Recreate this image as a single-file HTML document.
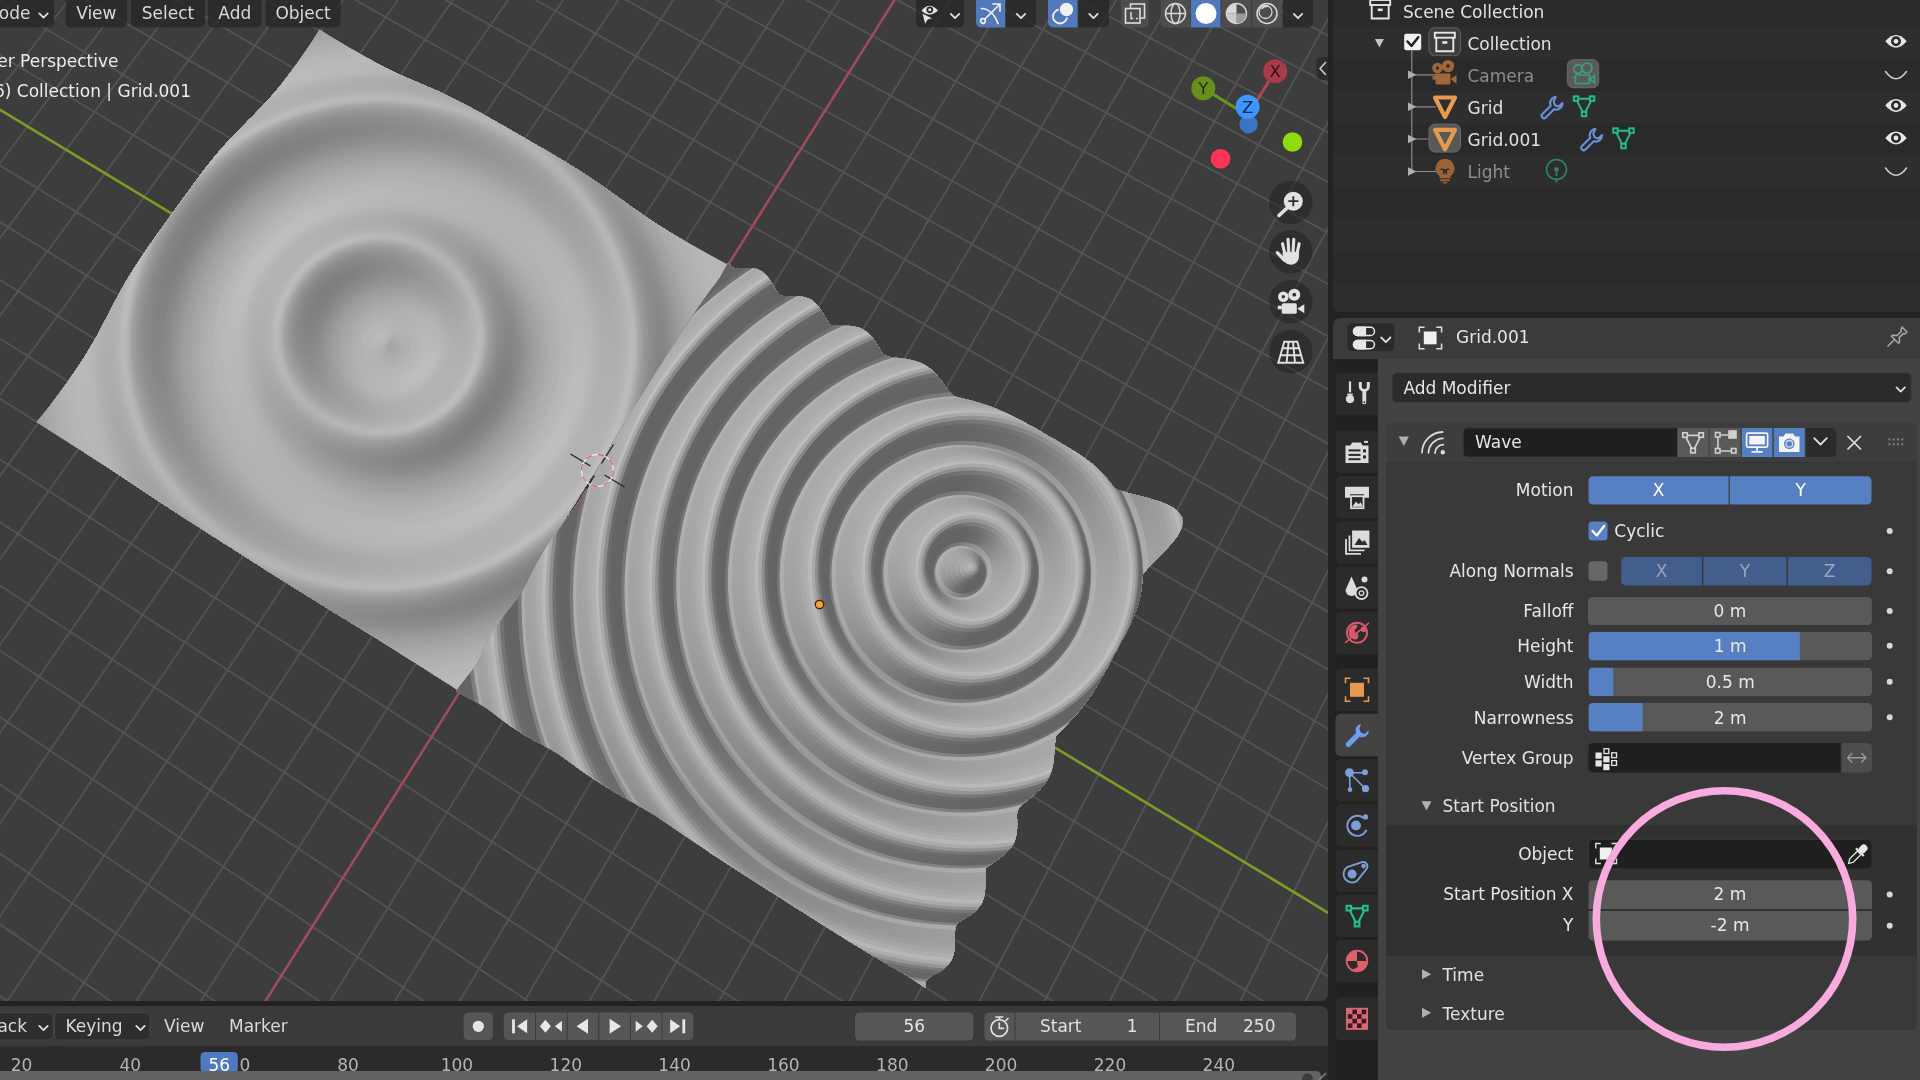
<!DOCTYPE html><html><head><meta charset="utf-8"><title>Blender</title>
<style>html,body{margin:0;padding:0}body{width:1920px;height:1080px;overflow:hidden;position:relative;background:#222222;font-family:"DejaVu Sans","Liberation Sans",sans-serif}svg{will-change:transform}svg text{font-family:"DejaVu Sans","Liberation Sans",sans-serif}</style></head><body>
<svg width="1328" height="1001" viewBox="0 0 1328 1001" style="position:absolute;left:0;top:0;background:#3d3d3d;border-radius:0 0 7px 0" font-family="DejaVu Sans, Liberation Sans, sans-serif"><defs><clipPath id="ac"><path d="M459.7 691.2L462.7 686.7L465.6 682.1L468.6 677.6L471.5 673.1L474.3 668.6L477.2 664.1L480.0 659.5L482.9 655.1L485.7 650.6L488.5 646.1L491.3 641.6L494.1 637.1L496.9 632.6L499.7 628.1L502.4 623.7L505.2 619.2L507.9 614.7L510.7 610.2L513.4 605.7L516.1 601.1L518.8 596.6L521.5 592.1L524.2 587.5L526.9 582.9L529.6 578.4L532.3 573.8L535.0 569.2L537.7 564.6L540.4 560.0L543.1 555.4L545.9 550.9L548.6 546.3L551.3 541.8L554.1 537.2L556.8 532.7L559.6 528.2L562.4 523.7L565.1 519.2L567.9 514.8L570.6 510.3L573.4 505.9L576.2 501.5L578.9 497.1L581.7 492.7L584.4 488.3L587.2 483.9L589.9 479.5L592.7 475.2L595.4 470.8L598.1 466.5L600.9 462.1L603.6 457.8L606.3 453.5L609.0 449.1L611.8 444.8L614.5 440.5L617.2 436.2L619.9 432.0L622.6 427.7L625.3 423.5L628.0 419.2L630.6 415.0L633.3 410.9L636.0 406.7L638.6 402.6L641.3 398.6L643.9 394.6L646.5 390.6L649.1 386.6L651.7 382.7L654.3 378.9L656.9 375.0L659.5 371.2L662.0 367.5L664.5 363.7L667.1 360.0L669.6 356.2L672.1 352.5L674.6 348.7L677.1 344.9L679.6 341.1L682.2 337.3L684.7 333.4L687.2 329.6L689.7 325.7L692.2 321.7L694.7 317.8L697.3 313.8L699.8 309.8L702.3 305.8L704.8 301.8L707.4 297.8L709.9 293.8L712.4 289.7L715.0 285.6L717.5 281.5L720.1 277.3L722.7 273.1L725.3 268.9L727.9 264.5L727.9 264.5L723.5 262.4L719.2 260.3L714.9 258.0L710.6 255.7L706.4 253.4L702.1 251.1L697.9 248.7L693.6 246.3L689.4 243.9L685.2 241.4L681.0 238.9L676.8 236.4L672.6 233.9L668.5 231.4L664.3 228.8L660.1 226.2L656.0 223.5L651.8 220.8L647.6 218.0L643.5 215.2L639.3 212.3L635.2 209.4L631.0 206.5L626.8 203.5L622.7 200.5L618.5 197.5L614.3 194.5L610.1 191.5L605.9 188.6L601.7 185.6L597.5 182.7L593.3 179.8L589.1 177.0L584.9 174.2L580.7 171.5L576.5 168.8L572.2 166.2L568.0 163.6L563.8 161.0L559.6 158.5L555.4 156.0L551.2 153.5L547.0 151.1L542.9 148.6L538.7 146.2L534.5 143.8L530.3 141.4L526.2 139.0L522.0 136.6L517.8 134.2L513.7 131.8L509.5 129.5L505.4 127.1L501.2 124.7L497.1 122.3L493.0 120.0L488.8 117.6L484.7 115.3L480.6 113.0L476.5 110.7L472.4 108.5L468.3 106.3L464.3 104.1L460.2 102.0L456.2 99.9L452.2 97.9L448.2 96.0L444.3 94.1L440.3 92.3L436.4 90.5L432.5 88.8L428.7 87.2L424.8 85.5L421.0 83.9L417.2 82.3L413.4 80.7L409.6 79.1L405.8 77.4L402.0 75.7L398.2 74.0L394.4 72.2L390.6 70.4L386.7 68.5L382.9 66.5L379.0 64.5L375.1 62.4L371.3 60.3L367.4 58.2L363.5 56.0L359.5 53.8L355.6 51.6L351.7 49.4L347.7 47.0L343.8 44.7L339.8 42.3L335.8 39.9L331.8 37.4L327.8 34.9L323.7 32.2L319.6 29.4L319.6 29.4L317.1 33.6L314.6 37.7L312.1 41.7L309.6 45.6L307.0 49.5L304.3 53.3L301.7 57.1L299.1 60.9L296.4 64.6L293.7 68.2L291.0 71.9L288.2 75.5L285.5 79.1L282.7 82.7L279.9 86.2L277.0 89.7L274.1 93.2L271.2 96.5L268.3 99.9L265.3 103.2L262.2 106.4L259.1 109.6L256.0 112.8L252.9 116.0L249.7 119.1L246.5 122.3L243.3 125.5L240.1 128.7L237.0 131.9L233.8 135.2L230.6 138.5L227.5 141.9L224.4 145.4L221.3 148.9L218.2 152.5L215.2 156.1L212.2 159.8L209.2 163.5L206.3 167.3L203.3 171.1L200.4 175.0L197.5 178.9L194.6 182.8L191.7 186.7L188.9 190.7L186.0 194.6L183.1 198.6L180.2 202.6L177.3 206.6L174.5 210.5L171.6 214.5L168.7 218.5L165.8 222.5L162.9 226.6L160.0 230.6L157.1 234.6L154.2 238.7L151.3 242.7L148.5 246.8L145.6 250.9L142.8 255.1L140.0 259.2L137.2 263.4L134.5 267.7L131.8 272.0L129.2 276.3L126.6 280.6L124.0 285.0L121.5 289.5L119.1 293.9L116.6 298.4L114.2 302.9L111.9 307.5L109.5 312.0L107.2 316.5L104.8 321.1L102.5 325.6L100.1 330.0L97.7 334.5L95.2 338.9L92.7 343.3L90.2 347.6L87.5 351.9L84.9 356.2L82.2 360.5L79.4 364.7L76.6 368.9L73.8 373.0L70.9 377.2L68.0 381.4L65.1 385.5L62.1 389.6L59.1 393.7L56.0 397.8L52.9 401.9L49.8 406.0L46.6 410.0L43.3 414.1L39.9 418.1L36.4 422.0L36.4 422.0L41.0 424.8L45.4 427.6L49.7 430.3L54.0 432.9L58.2 435.6L62.3 438.2L66.5 440.8L70.6 443.4L74.6 446.0L78.7 448.6L82.7 451.1L86.6 453.7L90.6 456.2L94.5 458.8L98.4 461.3L102.3 463.8L106.1 466.3L109.9 468.7L113.6 471.2L117.3 473.6L121.0 476.0L124.6 478.4L128.2 480.8L131.8 483.2L135.4 485.6L139.0 488.0L142.6 490.4L146.2 492.9L149.9 495.3L153.6 497.8L157.3 500.2L161.1 502.8L165.0 505.3L168.9 507.8L172.9 510.4L176.9 513.0L180.9 515.7L185.0 518.3L189.2 521.0L193.4 523.6L197.6 526.3L201.8 529.0L206.0 531.7L210.3 534.5L214.6 537.2L218.9 539.9L223.2 542.7L227.5 545.4L231.8 548.1L236.1 550.9L240.4 553.6L244.7 556.4L249.0 559.1L253.4 561.9L257.7 564.6L262.0 567.4L266.4 570.2L270.8 572.9L275.2 575.7L279.6 578.5L284.0 581.3L288.4 584.1L292.9 586.9L297.4 589.7L301.9 592.6L306.5 595.4L311.1 598.2L315.7 601.1L320.3 603.9L325.0 606.8L329.7 609.7L334.4 612.5L339.0 615.4L343.7 618.3L348.4 621.1L353.1 624.0L357.8 626.8L362.4 629.7L367.0 632.5L371.6 635.3L376.2 638.1L380.7 641.0L385.2 643.8L389.7 646.6L394.1 649.3L398.6 652.1L403.0 654.9L407.4 657.7L411.8 660.5L416.2 663.3L420.6 666.1L425.0 668.8L429.4 671.6L433.7 674.4L438.1 677.2L442.4 680.0L446.8 682.8L451.1 685.6L455.4 688.4L459.7 691.2Z"/></clipPath><linearGradient id="a0" x1="0.119" y1="0.176" x2="0.881" y2="0.824"><stop offset="0" stop-color="#989898"/><stop offset="0.167" stop-color="#9d9d9d"/><stop offset="0.333" stop-color="#a3a3a3"/><stop offset="0.5" stop-color="#aaaaaa"/><stop offset="0.667" stop-color="#b1b1b1"/><stop offset="0.833" stop-color="#b6b6b6"/><stop offset="1" stop-color="#bcbcbc"/></linearGradient><linearGradient id="a1" x1="0.119" y1="0.176" x2="0.881" y2="0.824"><stop offset="0" stop-color="#9b9b9b"/><stop offset="0.167" stop-color="#a0a0a0"/><stop offset="0.333" stop-color="#a5a5a5"/><stop offset="0.5" stop-color="#acacac"/><stop offset="0.667" stop-color="#b3b3b3"/><stop offset="0.833" stop-color="#b7b7b7"/><stop offset="1" stop-color="#bebebe"/></linearGradient><linearGradient id="a2" x1="0.119" y1="0.176" x2="0.881" y2="0.824"><stop offset="0" stop-color="#9d9d9d"/><stop offset="0.167" stop-color="#a1a1a1"/><stop offset="0.333" stop-color="#a7a7a7"/><stop offset="0.5" stop-color="#adadad"/><stop offset="0.667" stop-color="#b4b4b4"/><stop offset="0.833" stop-color="#b7b7b7"/><stop offset="1" stop-color="#bebebe"/></linearGradient><linearGradient id="a3" x1="0.119" y1="0.176" x2="0.881" y2="0.824"><stop offset="0" stop-color="#a1a1a1"/><stop offset="0.167" stop-color="#a5a5a5"/><stop offset="0.333" stop-color="#aaaaaa"/><stop offset="0.5" stop-color="#afafaf"/><stop offset="0.667" stop-color="#b5b5b5"/><stop offset="0.833" stop-color="#b8b8b8"/><stop offset="1" stop-color="#bebebe"/></linearGradient><linearGradient id="a4" x1="0.119" y1="0.176" x2="0.881" y2="0.824"><stop offset="0" stop-color="#a3a3a3"/><stop offset="0.167" stop-color="#a7a7a7"/><stop offset="0.333" stop-color="#acacac"/><stop offset="0.5" stop-color="#b0b0b0"/><stop offset="0.667" stop-color="#b5b5b5"/><stop offset="0.833" stop-color="#b8b8b8"/><stop offset="1" stop-color="#bebebe"/></linearGradient><linearGradient id="a5" x1="0.119" y1="0.176" x2="0.881" y2="0.824"><stop offset="0" stop-color="#a5a5a5"/><stop offset="0.167" stop-color="#a8a8a8"/><stop offset="0.333" stop-color="#adadad"/><stop offset="0.5" stop-color="#b1b1b1"/><stop offset="0.667" stop-color="#b5b5b5"/><stop offset="0.833" stop-color="#b8b8b8"/><stop offset="1" stop-color="#bebebe"/></linearGradient><linearGradient id="a6" x1="0.119" y1="0.176" x2="0.881" y2="0.824"><stop offset="0" stop-color="#a7a7a7"/><stop offset="0.167" stop-color="#ababab"/><stop offset="0.333" stop-color="#aeaeae"/><stop offset="0.5" stop-color="#b2b2b2"/><stop offset="0.667" stop-color="#b5b5b5"/><stop offset="0.833" stop-color="#b9b9b9"/><stop offset="1" stop-color="#bcbcbc"/></linearGradient><linearGradient id="a7" x1="0.119" y1="0.176" x2="0.881" y2="0.824"><stop offset="0" stop-color="#aaaaaa"/><stop offset="0.167" stop-color="#adadad"/><stop offset="0.333" stop-color="#b0b0b0"/><stop offset="0.5" stop-color="#b2b2b2"/><stop offset="0.667" stop-color="#b5b5b5"/><stop offset="0.833" stop-color="#b8b8b8"/><stop offset="1" stop-color="#bababa"/></linearGradient><linearGradient id="a8" x1="0.119" y1="0.176" x2="0.881" y2="0.824"><stop offset="0" stop-color="#adadad"/><stop offset="0.167" stop-color="#afafaf"/><stop offset="0.333" stop-color="#b1b1b1"/><stop offset="0.5" stop-color="#b3b3b3"/><stop offset="0.667" stop-color="#b5b5b5"/><stop offset="0.833" stop-color="#b6b6b6"/><stop offset="1" stop-color="#b8b8b8"/></linearGradient><linearGradient id="a9" x1="0.119" y1="0.176" x2="0.881" y2="0.824"><stop offset="0" stop-color="#b0b0b0"/><stop offset="0.167" stop-color="#b1b1b1"/><stop offset="0.333" stop-color="#b2b2b2"/><stop offset="0.5" stop-color="#b3b3b3"/><stop offset="0.667" stop-color="#b4b4b4"/><stop offset="0.833" stop-color="#b5b5b5"/><stop offset="1" stop-color="#b6b6b6"/></linearGradient><linearGradient id="a10" x1="0.119" y1="0.176" x2="0.881" y2="0.824"><stop offset="0" stop-color="#b6b6b6"/><stop offset="0.167" stop-color="#b5b5b5"/><stop offset="0.333" stop-color="#b4b4b4"/><stop offset="0.5" stop-color="#b3b3b3"/><stop offset="0.667" stop-color="#b2b2b2"/><stop offset="0.833" stop-color="#b1b1b1"/><stop offset="1" stop-color="#b0b0b0"/></linearGradient><linearGradient id="a11" x1="0.119" y1="0.176" x2="0.881" y2="0.824"><stop offset="0" stop-color="#b8b8b8"/><stop offset="0.167" stop-color="#b6b6b6"/><stop offset="0.333" stop-color="#b5b5b5"/><stop offset="0.5" stop-color="#b3b3b3"/><stop offset="0.667" stop-color="#b1b1b1"/><stop offset="0.833" stop-color="#afafaf"/><stop offset="1" stop-color="#adadad"/></linearGradient><linearGradient id="a12" x1="0.119" y1="0.176" x2="0.881" y2="0.824"><stop offset="0" stop-color="#bababa"/><stop offset="0.167" stop-color="#b8b8b8"/><stop offset="0.333" stop-color="#b5b5b5"/><stop offset="0.5" stop-color="#b2b2b2"/><stop offset="0.667" stop-color="#b0b0b0"/><stop offset="0.833" stop-color="#adadad"/><stop offset="1" stop-color="#aaaaaa"/></linearGradient><linearGradient id="a13" x1="0.119" y1="0.176" x2="0.881" y2="0.824"><stop offset="0" stop-color="#bcbcbc"/><stop offset="0.167" stop-color="#b9b9b9"/><stop offset="0.333" stop-color="#b5b5b5"/><stop offset="0.5" stop-color="#b2b2b2"/><stop offset="0.667" stop-color="#aeaeae"/><stop offset="0.833" stop-color="#ababab"/><stop offset="1" stop-color="#a7a7a7"/></linearGradient><linearGradient id="a14" x1="0.119" y1="0.176" x2="0.881" y2="0.824"><stop offset="0" stop-color="#bebebe"/><stop offset="0.167" stop-color="#b8b8b8"/><stop offset="0.333" stop-color="#b5b5b5"/><stop offset="0.5" stop-color="#b1b1b1"/><stop offset="0.667" stop-color="#adadad"/><stop offset="0.833" stop-color="#a8a8a8"/><stop offset="1" stop-color="#a5a5a5"/></linearGradient><linearGradient id="a15" x1="0.119" y1="0.176" x2="0.881" y2="0.824"><stop offset="0" stop-color="#bebebe"/><stop offset="0.167" stop-color="#b8b8b8"/><stop offset="0.333" stop-color="#b5b5b5"/><stop offset="0.5" stop-color="#b0b0b0"/><stop offset="0.667" stop-color="#acacac"/><stop offset="0.833" stop-color="#a7a7a7"/><stop offset="1" stop-color="#a3a3a3"/></linearGradient><linearGradient id="a16" x1="0.119" y1="0.176" x2="0.881" y2="0.824"><stop offset="0" stop-color="#bebebe"/><stop offset="0.167" stop-color="#b8b8b8"/><stop offset="0.333" stop-color="#b5b5b5"/><stop offset="0.5" stop-color="#afafaf"/><stop offset="0.667" stop-color="#aaaaaa"/><stop offset="0.833" stop-color="#a5a5a5"/><stop offset="1" stop-color="#a1a1a1"/></linearGradient><linearGradient id="a17" x1="0.119" y1="0.176" x2="0.881" y2="0.824"><stop offset="0" stop-color="#bebebe"/><stop offset="0.167" stop-color="#b7b7b7"/><stop offset="0.333" stop-color="#b4b4b4"/><stop offset="0.5" stop-color="#adadad"/><stop offset="0.667" stop-color="#a7a7a7"/><stop offset="0.833" stop-color="#a1a1a1"/><stop offset="1" stop-color="#9d9d9d"/></linearGradient><linearGradient id="a18" x1="0.119" y1="0.176" x2="0.881" y2="0.824"><stop offset="0" stop-color="#bebebe"/><stop offset="0.167" stop-color="#b7b7b7"/><stop offset="0.333" stop-color="#b3b3b3"/><stop offset="0.5" stop-color="#acacac"/><stop offset="0.667" stop-color="#a5a5a5"/><stop offset="0.833" stop-color="#a0a0a0"/><stop offset="1" stop-color="#9b9b9b"/></linearGradient><linearGradient id="a19" x1="0.119" y1="0.176" x2="0.881" y2="0.824"><stop offset="0" stop-color="#bcbcbc"/><stop offset="0.167" stop-color="#b6b6b6"/><stop offset="0.333" stop-color="#b1b1b1"/><stop offset="0.5" stop-color="#aaaaaa"/><stop offset="0.667" stop-color="#a3a3a3"/><stop offset="0.833" stop-color="#9d9d9d"/><stop offset="1" stop-color="#989898"/></linearGradient><linearGradient id="a20" x1="0.119" y1="0.176" x2="0.881" y2="0.824"><stop offset="0" stop-color="#b9b9b9"/><stop offset="0.167" stop-color="#b6b6b6"/><stop offset="0.333" stop-color="#afafaf"/><stop offset="0.5" stop-color="#a7a7a7"/><stop offset="0.667" stop-color="#a0a0a0"/><stop offset="0.833" stop-color="#9a9a9a"/><stop offset="1" stop-color="#949494"/></linearGradient><linearGradient id="a21" x1="0.119" y1="0.176" x2="0.881" y2="0.824"><stop offset="0" stop-color="#b6b6b6"/><stop offset="0.167" stop-color="#b3b3b3"/><stop offset="0.333" stop-color="#adadad"/><stop offset="0.5" stop-color="#a4a4a4"/><stop offset="0.667" stop-color="#9e9e9e"/><stop offset="0.833" stop-color="#979797"/><stop offset="1" stop-color="#909090"/></linearGradient><linearGradient id="a22" x1="0.119" y1="0.176" x2="0.881" y2="0.824"><stop offset="0" stop-color="#b5b5b5"/><stop offset="0.167" stop-color="#b1b1b1"/><stop offset="0.333" stop-color="#aaaaaa"/><stop offset="0.5" stop-color="#a2a2a2"/><stop offset="0.667" stop-color="#9b9b9b"/><stop offset="0.833" stop-color="#949494"/><stop offset="1" stop-color="#8c8c8c"/></linearGradient><linearGradient id="a23" x1="0.119" y1="0.176" x2="0.881" y2="0.824"><stop offset="0" stop-color="#b4b4b4"/><stop offset="0.167" stop-color="#afafaf"/><stop offset="0.333" stop-color="#a8a8a8"/><stop offset="0.5" stop-color="#a0a0a0"/><stop offset="0.667" stop-color="#999999"/><stop offset="0.833" stop-color="#919191"/><stop offset="1" stop-color="#888888"/></linearGradient><linearGradient id="a24" x1="0.119" y1="0.176" x2="0.881" y2="0.824"><stop offset="0" stop-color="#b3b3b3"/><stop offset="0.167" stop-color="#aeaeae"/><stop offset="0.333" stop-color="#a6a6a6"/><stop offset="0.5" stop-color="#9f9f9f"/><stop offset="0.667" stop-color="#969696"/><stop offset="0.833" stop-color="#8d8d8d"/><stop offset="1" stop-color="#848484"/></linearGradient><linearGradient id="a25" x1="0.119" y1="0.176" x2="0.881" y2="0.824"><stop offset="0" stop-color="#b3b3b3"/><stop offset="0.167" stop-color="#adadad"/><stop offset="0.333" stop-color="#a6a6a6"/><stop offset="0.5" stop-color="#9e9e9e"/><stop offset="0.667" stop-color="#959595"/><stop offset="0.833" stop-color="#8c8c8c"/><stop offset="1" stop-color="#838383"/></linearGradient><linearGradient id="a26" x1="0.119" y1="0.176" x2="0.881" y2="0.824"><stop offset="0" stop-color="#b3b3b3"/><stop offset="0.167" stop-color="#acacac"/><stop offset="0.333" stop-color="#a4a4a4"/><stop offset="0.5" stop-color="#9c9c9c"/><stop offset="0.667" stop-color="#929292"/><stop offset="0.833" stop-color="#888888"/><stop offset="1" stop-color="#7f7f7f"/></linearGradient><linearGradient id="a27" x1="0.119" y1="0.176" x2="0.881" y2="0.824"><stop offset="0" stop-color="#b3b3b3"/><stop offset="0.167" stop-color="#ababab"/><stop offset="0.333" stop-color="#a3a3a3"/><stop offset="0.5" stop-color="#9b9b9b"/><stop offset="0.667" stop-color="#919191"/><stop offset="0.833" stop-color="#878787"/><stop offset="1" stop-color="#7d7d7d"/></linearGradient><linearGradient id="a28" x1="0.119" y1="0.176" x2="0.881" y2="0.824"><stop offset="0" stop-color="#b3b3b3"/><stop offset="0.167" stop-color="#adadad"/><stop offset="0.333" stop-color="#a5a5a5"/><stop offset="0.5" stop-color="#9d9d9d"/><stop offset="0.667" stop-color="#949494"/><stop offset="0.833" stop-color="#8a8a8a"/><stop offset="1" stop-color="#818181"/></linearGradient><linearGradient id="a29" x1="0.119" y1="0.176" x2="0.881" y2="0.824"><stop offset="0" stop-color="#b4b4b4"/><stop offset="0.167" stop-color="#afafaf"/><stop offset="0.333" stop-color="#a7a7a7"/><stop offset="0.5" stop-color="#9f9f9f"/><stop offset="0.667" stop-color="#989898"/><stop offset="0.833" stop-color="#8f8f8f"/><stop offset="1" stop-color="#868686"/></linearGradient><linearGradient id="a30" x1="0.119" y1="0.176" x2="0.881" y2="0.824"><stop offset="0" stop-color="#b8b8b8"/><stop offset="0.167" stop-color="#b4b4b4"/><stop offset="0.333" stop-color="#adadad"/><stop offset="0.5" stop-color="#a6a6a6"/><stop offset="0.667" stop-color="#9f9f9f"/><stop offset="0.833" stop-color="#989898"/><stop offset="1" stop-color="#929292"/></linearGradient><linearGradient id="a31" x1="0.119" y1="0.176" x2="0.881" y2="0.824"><stop offset="0" stop-color="#bdbdbd"/><stop offset="0.167" stop-color="#b6b6b6"/><stop offset="0.333" stop-color="#b2b2b2"/><stop offset="0.5" stop-color="#ababab"/><stop offset="0.667" stop-color="#a4a4a4"/><stop offset="0.833" stop-color="#9e9e9e"/><stop offset="1" stop-color="#9a9a9a"/></linearGradient><linearGradient id="a32" x1="0.119" y1="0.176" x2="0.881" y2="0.824"><stop offset="0" stop-color="#9a9a9a"/><stop offset="0.167" stop-color="#9e9e9e"/><stop offset="0.333" stop-color="#a4a4a4"/><stop offset="0.5" stop-color="#ababab"/><stop offset="0.667" stop-color="#b2b2b2"/><stop offset="0.833" stop-color="#b6b6b6"/><stop offset="1" stop-color="#bdbdbd"/></linearGradient><linearGradient id="a33" x1="0.119" y1="0.176" x2="0.881" y2="0.824"><stop offset="0" stop-color="#929292"/><stop offset="0.167" stop-color="#989898"/><stop offset="0.333" stop-color="#9f9f9f"/><stop offset="0.5" stop-color="#a6a6a6"/><stop offset="0.667" stop-color="#adadad"/><stop offset="0.833" stop-color="#b4b4b4"/><stop offset="1" stop-color="#b8b8b8"/></linearGradient><linearGradient id="a34" x1="0.119" y1="0.176" x2="0.881" y2="0.824"><stop offset="0" stop-color="#8c8c8c"/><stop offset="0.167" stop-color="#949494"/><stop offset="0.333" stop-color="#9b9b9b"/><stop offset="0.5" stop-color="#a2a2a2"/><stop offset="0.667" stop-color="#aaaaaa"/><stop offset="0.833" stop-color="#b1b1b1"/><stop offset="1" stop-color="#b5b5b5"/></linearGradient><linearGradient id="a35" x1="0.119" y1="0.176" x2="0.881" y2="0.824"><stop offset="0" stop-color="#868686"/><stop offset="0.167" stop-color="#8f8f8f"/><stop offset="0.333" stop-color="#989898"/><stop offset="0.5" stop-color="#9f9f9f"/><stop offset="0.667" stop-color="#a7a7a7"/><stop offset="0.833" stop-color="#afafaf"/><stop offset="1" stop-color="#b4b4b4"/></linearGradient><linearGradient id="a36" x1="0.119" y1="0.176" x2="0.881" y2="0.824"><stop offset="0" stop-color="#838383"/><stop offset="0.167" stop-color="#8c8c8c"/><stop offset="0.333" stop-color="#959595"/><stop offset="0.5" stop-color="#9e9e9e"/><stop offset="0.667" stop-color="#a6a6a6"/><stop offset="0.833" stop-color="#adadad"/><stop offset="1" stop-color="#b3b3b3"/></linearGradient><linearGradient id="a37" x1="0.119" y1="0.176" x2="0.881" y2="0.824"><stop offset="0" stop-color="#818181"/><stop offset="0.167" stop-color="#8a8a8a"/><stop offset="0.333" stop-color="#949494"/><stop offset="0.5" stop-color="#9d9d9d"/><stop offset="0.667" stop-color="#a5a5a5"/><stop offset="0.833" stop-color="#adadad"/><stop offset="1" stop-color="#b3b3b3"/></linearGradient><linearGradient id="a38" x1="0.119" y1="0.176" x2="0.881" y2="0.824"><stop offset="0" stop-color="#7f7f7f"/><stop offset="0.167" stop-color="#888888"/><stop offset="0.333" stop-color="#929292"/><stop offset="0.5" stop-color="#9c9c9c"/><stop offset="0.667" stop-color="#a4a4a4"/><stop offset="0.833" stop-color="#acacac"/><stop offset="1" stop-color="#b3b3b3"/></linearGradient><linearGradient id="a39" x1="0.119" y1="0.176" x2="0.881" y2="0.824"><stop offset="0" stop-color="#7d7d7d"/><stop offset="0.167" stop-color="#878787"/><stop offset="0.333" stop-color="#919191"/><stop offset="0.5" stop-color="#9b9b9b"/><stop offset="0.667" stop-color="#a3a3a3"/><stop offset="0.833" stop-color="#ababab"/><stop offset="1" stop-color="#b3b3b3"/></linearGradient><linearGradient id="a40" x1="0.119" y1="0.176" x2="0.881" y2="0.824"><stop offset="0" stop-color="#848484"/><stop offset="0.167" stop-color="#8d8d8d"/><stop offset="0.333" stop-color="#969696"/><stop offset="0.5" stop-color="#9f9f9f"/><stop offset="0.667" stop-color="#a6a6a6"/><stop offset="0.833" stop-color="#aeaeae"/><stop offset="1" stop-color="#b3b3b3"/></linearGradient><linearGradient id="a41" x1="0.119" y1="0.176" x2="0.881" y2="0.824"><stop offset="0" stop-color="#888888"/><stop offset="0.167" stop-color="#919191"/><stop offset="0.333" stop-color="#999999"/><stop offset="0.5" stop-color="#a0a0a0"/><stop offset="0.667" stop-color="#a8a8a8"/><stop offset="0.833" stop-color="#afafaf"/><stop offset="1" stop-color="#b4b4b4"/></linearGradient><linearGradient id="a42" x1="0.119" y1="0.176" x2="0.881" y2="0.824"><stop offset="0" stop-color="#909090"/><stop offset="0.167" stop-color="#979797"/><stop offset="0.333" stop-color="#9e9e9e"/><stop offset="0.5" stop-color="#a4a4a4"/><stop offset="0.667" stop-color="#adadad"/><stop offset="0.833" stop-color="#b3b3b3"/><stop offset="1" stop-color="#b6b6b6"/></linearGradient><linearGradient id="a43" x1="0.119" y1="0.176" x2="0.881" y2="0.824"><stop offset="0" stop-color="#949494"/><stop offset="0.167" stop-color="#9a9a9a"/><stop offset="0.333" stop-color="#a0a0a0"/><stop offset="0.5" stop-color="#a7a7a7"/><stop offset="0.667" stop-color="#afafaf"/><stop offset="0.833" stop-color="#b6b6b6"/><stop offset="1" stop-color="#b9b9b9"/></linearGradient><clipPath id="bc"><path d="M925.6 988.1L925.9 980.9L929.6 976.9L934.9 974.1L940.1 971.2L944.9 967.9L949.0 964.0L952.0 959.1L953.9 953.4L954.7 947.0L955.0 940.2L955.0 933.4L955.1 926.7L958.5 922.3L963.8 919.1L969.1 915.9L974.1 912.3L978.3 908.3L981.6 903.6L983.8 898.3L984.9 892.5L985.2 886.4L985.2 880.1L985.1 873.9L985.7 868.1L990.7 864.5L996.0 860.8L1001.3 857.1L1006.1 853.1L1010.2 848.8L1013.4 844.1L1015.5 839.0L1016.6 833.5L1017.1 827.9L1017.1 822.3L1017.0 816.6L1017.1 811.1L1019.8 806.5L1024.8 802.4L1029.9 798.3L1034.9 794.1L1039.6 789.8L1043.7 785.3L1047.0 780.7L1049.6 775.9L1051.5 770.9L1052.7 765.9L1053.5 760.8L1054.0 755.8L1054.4 750.7L1054.8 745.8L1055.3 740.9L1056.1 736.0L1060.3 731.6L1064.5 727.1L1068.8 722.6L1072.9 718.0L1077.0 713.5L1080.9 708.9L1084.5 704.2L1088.0 699.6L1091.3 694.9L1094.4 690.2L1097.3 685.5L1100.1 680.8L1102.7 676.1L1105.3 671.4L1107.9 666.8L1110.4 662.1L1112.9 657.5L1115.3 652.8L1117.8 648.2L1120.3 643.5L1122.7 638.9L1125.1 634.3L1127.5 629.7L1129.8 625.1L1131.9 620.5L1133.9 616.0L1135.8 611.5L1137.4 607.0L1138.7 602.7L1139.8 598.3L1140.7 594.1L1141.4 589.9L1141.9 585.8L1142.3 581.7L1142.7 577.7L1143.1 573.7L1147.4 568.8L1152.0 563.9L1156.9 558.9L1161.8 553.8L1166.7 548.8L1171.2 543.8L1175.2 538.9L1178.5 534.2L1180.8 529.7L1182.2 525.5L1182.7 521.6L1182.4 518.0L1182.4 518.0L1180.3 514.4L1177.4 511.1L1173.7 508.1L1168.9 505.3L1163.3 502.9L1157.0 500.7L1150.2 498.7L1143.1 496.8L1136.0 495.0L1129.0 493.2L1122.2 491.3L1115.8 489.4L1113.0 486.0L1110.3 482.6L1107.5 479.2L1104.6 475.8L1101.6 472.5L1098.3 469.2L1094.8 466.0L1091.1 462.9L1087.1 459.9L1083.0 456.9L1078.7 454.0L1074.3 451.2L1069.8 448.5L1065.2 445.7L1060.6 443.0L1056.0 440.3L1051.3 437.7L1046.6 435.0L1042.0 432.3L1037.3 429.6L1032.7 427.0L1028.0 424.4L1023.3 421.7L1018.5 419.2L1013.7 416.7L1008.8 414.2L1003.7 411.9L998.5 409.7L993.2 407.6L987.7 405.6L982.1 403.8L976.4 402.1L970.6 400.4L964.8 398.9L959.0 397.4L953.3 395.8L950.1 392.2L947.0 388.5L944.1 384.6L941.1 380.6L938.0 376.7L934.7 372.9L931.1 369.5L927.1 366.4L922.5 363.8L917.4 361.7L911.9 360.2L906.0 359.1L900.0 358.3L893.9 357.6L887.9 356.8L883.4 354.4L880.5 350.0L877.8 345.5L874.9 341.0L871.7 336.7L868.1 333.0L863.9 330.0L859.1 327.8L853.8 326.5L848.1 325.8L842.2 325.5L836.3 325.2L830.6 324.9L827.3 320.7L824.4 315.8L821.4 310.8L818.2 306.2L814.5 302.3L810.4 299.2L805.6 297.3L800.4 296.3L794.9 296.0L789.3 296.1L783.7 296.2L779.1 294.5L775.9 289.4L772.7 284.2L769.4 279.2L765.8 274.8L761.7 271.4L757.2 269.1L752.3 268.1L747.1 268.0L741.8 268.3L736.6 268.7L731.9 267.6L728.5 262.3L728.5 262.3L725.6 267.5L722.8 272.7L720.0 277.7L717.7 280.9L715.5 283.9L713.2 287.0L710.9 290.0L708.6 293.2L706.3 296.4L703.9 299.6L701.6 303.0L699.1 306.4L696.7 309.9L694.2 313.6L691.7 317.3L689.2 321.1L686.6 324.9L684.1 328.8L681.5 332.8L678.9 336.9L676.3 341.0L673.6 345.1L671.0 349.3L668.4 353.4L665.7 357.6L663.0 361.9L660.4 366.1L657.7 370.3L655.0 374.6L652.4 378.8L649.7 383.1L647.0 387.3L644.3 391.6L641.6 395.9L638.9 400.2L636.2 404.5L633.5 408.8L630.8 413.1L628.1 417.5L625.4 421.9L622.7 426.3L620.0 430.8L617.2 435.3L614.5 439.8L611.8 444.4L609.0 449.0L606.3 453.7L603.6 458.4L600.9 463.1L598.2 467.9L595.5 472.6L592.8 477.4L590.1 482.3L587.4 487.1L584.8 491.9L582.1 496.7L579.5 501.3L576.7 505.2L573.9 509.0L571.1 512.8L568.2 516.6L565.4 520.4L562.5 524.3L559.6 528.2L556.7 532.1L553.8 536.2L550.9 540.4L548.0 544.8L545.2 549.2L542.4 553.8L539.7 558.5L537.0 563.3L534.4 568.2L531.9 573.1L529.4 578.0L526.9 582.9L524.4 587.8L522.0 592.6L519.0 596.8L515.9 600.9L512.6 605.0L509.4 609.1L506.1 613.3L502.9 617.5L499.7 621.9L496.7 626.4L493.8 631.0L491.0 635.6L488.5 640.4L486.0 645.2L483.7 649.9L481.5 654.7L479.3 659.4L477.1 664.0L473.9 668.5L470.3 672.9L466.7 677.4L463.1 682.0L459.5 686.6L456.1 691.3L456.1 691.3L461.1 694.2L466.3 697.0L471.5 699.8L476.7 702.6L481.8 705.3L486.6 708.1L490.5 711.1L494.4 714.0L498.3 717.1L502.3 720.1L506.5 723.1L510.8 726.2L515.3 729.1L519.9 732.1L524.6 734.9L529.4 737.7L534.3 740.4L539.2 743.1L544.0 745.7L548.8 748.3L553.6 750.9L558.2 753.6L562.5 756.8L566.9 760.0L571.3 763.2L575.8 766.5L580.3 769.7L584.9 773.0L589.5 776.1L594.2 779.3L598.8 782.3L603.5 785.3L608.2 788.1L612.9 790.9L617.5 793.7L622.1 796.3L626.7 798.9L631.3 801.5L635.8 804.1L640.3 806.6L644.8 809.2L649.3 811.8L653.7 814.3L658.5 817.6L663.2 820.8L668.0 824.1L672.9 827.5L677.7 830.8L682.6 834.1L687.5 837.4L692.4 840.8L697.3 844.1L702.2 847.3L707.1 850.6L712.0 853.9L716.9 857.1L721.8 860.3L726.7 863.5L731.5 866.6L736.4 869.7L741.2 872.9L746.1 876.0L751.0 879.1L755.8 882.2L760.6 885.3L765.5 888.4L770.3 891.4L775.2 894.5L780.0 897.6L784.9 900.7L789.8 903.8L794.6 906.9L799.5 910.0L804.4 913.1L809.3 916.2L814.1 919.3L819.0 922.4L823.9 925.5L828.7 928.5L833.5 931.6L838.3 934.6L843.1 937.5L847.8 940.5L852.5 943.4L857.1 946.2L861.7 949.0L866.2 951.7L870.7 954.4L875.0 957.0L879.3 959.5L883.6 962.0L887.7 964.4L891.9 966.8L895.9 969.1L900.0 971.4L904.0 973.7L908.2 976.2L913.9 980.0L919.7 984.0L925.6 988.1Z"/></clipPath><linearGradient id="b0" x1="0.119" y1="0.176" x2="0.881" y2="0.824"><stop offset="0" stop-color="#878787"/><stop offset="0.167" stop-color="#929292"/><stop offset="0.333" stop-color="#9c9c9c"/><stop offset="0.5" stop-color="#a4a4a4"/><stop offset="0.667" stop-color="#ababab"/><stop offset="0.833" stop-color="#afafaf"/><stop offset="1" stop-color="#b2b2b2"/></linearGradient><linearGradient id="b1" x1="0.119" y1="0.176" x2="0.881" y2="0.824"><stop offset="0" stop-color="#646464"/><stop offset="0.167" stop-color="#757575"/><stop offset="0.333" stop-color="#858585"/><stop offset="0.5" stop-color="#959595"/><stop offset="0.667" stop-color="#a1a1a1"/><stop offset="0.833" stop-color="#aaaaaa"/><stop offset="1" stop-color="#b0b0b0"/></linearGradient><linearGradient id="b2" x1="0.119" y1="0.176" x2="0.881" y2="0.824"><stop offset="0" stop-color="#646464"/><stop offset="0.167" stop-color="#676767"/><stop offset="0.333" stop-color="#757575"/><stop offset="0.5" stop-color="#898989"/><stop offset="0.667" stop-color="#989898"/><stop offset="0.833" stop-color="#a4a4a4"/><stop offset="1" stop-color="#aeaeae"/></linearGradient><linearGradient id="b3" x1="0.119" y1="0.176" x2="0.881" y2="0.824"><stop offset="0" stop-color="#646464"/><stop offset="0.167" stop-color="#646464"/><stop offset="0.333" stop-color="#6e6e6e"/><stop offset="0.5" stop-color="#828282"/><stop offset="0.667" stop-color="#949494"/><stop offset="0.833" stop-color="#a1a1a1"/><stop offset="1" stop-color="#ababab"/></linearGradient><linearGradient id="b4" x1="0.119" y1="0.176" x2="0.881" y2="0.824"><stop offset="0" stop-color="#646464"/><stop offset="0.167" stop-color="#646464"/><stop offset="0.333" stop-color="#6d6d6d"/><stop offset="0.5" stop-color="#808080"/><stop offset="0.667" stop-color="#929292"/><stop offset="0.833" stop-color="#a0a0a0"/><stop offset="1" stop-color="#ababab"/></linearGradient><linearGradient id="b5" x1="0.119" y1="0.176" x2="0.881" y2="0.824"><stop offset="0" stop-color="#6d6d6d"/><stop offset="0.167" stop-color="#7d7d7d"/><stop offset="0.333" stop-color="#8c8c8c"/><stop offset="0.5" stop-color="#999999"/><stop offset="0.667" stop-color="#a4a4a4"/><stop offset="0.833" stop-color="#acacac"/><stop offset="1" stop-color="#b1b1b1"/></linearGradient><linearGradient id="b6" x1="0.119" y1="0.176" x2="0.881" y2="0.824"><stop offset="0" stop-color="#b1b1b1"/><stop offset="0.167" stop-color="#acacac"/><stop offset="0.333" stop-color="#a4a4a4"/><stop offset="0.5" stop-color="#999999"/><stop offset="0.667" stop-color="#8c8c8c"/><stop offset="0.833" stop-color="#7d7d7d"/><stop offset="1" stop-color="#6d6d6d"/></linearGradient><linearGradient id="b7" x1="0.119" y1="0.176" x2="0.881" y2="0.824"><stop offset="0" stop-color="#ababab"/><stop offset="0.167" stop-color="#a0a0a0"/><stop offset="0.333" stop-color="#929292"/><stop offset="0.5" stop-color="#808080"/><stop offset="0.667" stop-color="#6d6d6d"/><stop offset="0.833" stop-color="#646464"/><stop offset="1" stop-color="#646464"/></linearGradient><linearGradient id="b8" x1="0.119" y1="0.176" x2="0.881" y2="0.824"><stop offset="0" stop-color="#ababab"/><stop offset="0.167" stop-color="#a1a1a1"/><stop offset="0.333" stop-color="#949494"/><stop offset="0.5" stop-color="#828282"/><stop offset="0.667" stop-color="#6e6e6e"/><stop offset="0.833" stop-color="#646464"/><stop offset="1" stop-color="#646464"/></linearGradient><linearGradient id="b9" x1="0.119" y1="0.176" x2="0.881" y2="0.824"><stop offset="0" stop-color="#aeaeae"/><stop offset="0.167" stop-color="#a4a4a4"/><stop offset="0.333" stop-color="#989898"/><stop offset="0.5" stop-color="#898989"/><stop offset="0.667" stop-color="#757575"/><stop offset="0.833" stop-color="#676767"/><stop offset="1" stop-color="#646464"/></linearGradient><linearGradient id="b10" x1="0.119" y1="0.176" x2="0.881" y2="0.824"><stop offset="0" stop-color="#b0b0b0"/><stop offset="0.167" stop-color="#aaaaaa"/><stop offset="0.333" stop-color="#a1a1a1"/><stop offset="0.5" stop-color="#959595"/><stop offset="0.667" stop-color="#858585"/><stop offset="0.833" stop-color="#757575"/><stop offset="1" stop-color="#646464"/></linearGradient><linearGradient id="b11" x1="0.119" y1="0.176" x2="0.881" y2="0.824"><stop offset="0" stop-color="#b2b2b2"/><stop offset="0.167" stop-color="#afafaf"/><stop offset="0.333" stop-color="#ababab"/><stop offset="0.5" stop-color="#a4a4a4"/><stop offset="0.667" stop-color="#9c9c9c"/><stop offset="0.833" stop-color="#929292"/><stop offset="1" stop-color="#878787"/></linearGradient><linearGradient id="b12" x1="0.119" y1="0.176" x2="0.881" y2="0.824"><stop offset="0" stop-color="#bebebe"/><stop offset="0.167" stop-color="#b8b8b8"/><stop offset="0.333" stop-color="#b6b6b6"/><stop offset="0.5" stop-color="#b0b0b0"/><stop offset="0.667" stop-color="#adadad"/><stop offset="0.833" stop-color="#a9a9a9"/><stop offset="1" stop-color="#a6a6a6"/></linearGradient><linearGradient id="b13" x1="0.119" y1="0.176" x2="0.881" y2="0.824"><stop offset="0" stop-color="#a6a6a6"/><stop offset="0.167" stop-color="#a9a9a9"/><stop offset="0.333" stop-color="#adadad"/><stop offset="0.5" stop-color="#b0b0b0"/><stop offset="0.667" stop-color="#b6b6b6"/><stop offset="0.833" stop-color="#b8b8b8"/><stop offset="1" stop-color="#bebebe"/></linearGradient></defs><g stroke="#535353" stroke-width="1.9">
<line x1="1201.1" y1="2559.2" x2="-1093.9" y2="790.7"/>
<line x1="1231.2" y1="2484.7" x2="-1054.7" y2="744.6"/>
<line x1="1260.8" y1="2411.4" x2="-1016.1" y2="699.2"/>
<line x1="1289.9" y1="2339.5" x2="-978.1" y2="654.3"/>
<line x1="1318.4" y1="2268.8" x2="-940.5" y2="610.1"/>
<line x1="1346.5" y1="2199.2" x2="-903.4" y2="566.4"/>
<line x1="1374.1" y1="2130.9" x2="-866.8" y2="523.3"/>
<line x1="1401.3" y1="2063.6" x2="-830.7" y2="480.8"/>
<line x1="1428.0" y1="1997.5" x2="-795.1" y2="438.8"/>
<line x1="1454.3" y1="1932.5" x2="-759.9" y2="397.4"/>
<line x1="1480.1" y1="1868.5" x2="-725.2" y2="356.5"/>
<line x1="1505.6" y1="1805.5" x2="-690.9" y2="316.1"/>
<line x1="1530.6" y1="1743.5" x2="-657.1" y2="276.3"/>
<line x1="1555.2" y1="1682.5" x2="-623.7" y2="236.9"/>
<line x1="1579.5" y1="1622.5" x2="-590.7" y2="198.0"/>
<line x1="1603.3" y1="1563.4" x2="-558.1" y2="159.6"/>
<line x1="1626.8" y1="1505.2" x2="-525.9" y2="121.7"/>
<line x1="1650.0" y1="1448.0" x2="-494.1" y2="84.3"/>
<line x1="1672.8" y1="1391.5" x2="-462.7" y2="47.3"/>
<line x1="1695.2" y1="1336.0" x2="-431.7" y2="10.8"/>
<line x1="1717.3" y1="1281.2" x2="-401.0" y2="-25.3"/>
<line x1="1739.1" y1="1227.3" x2="-370.8" y2="-61.0"/>
<line x1="1781.7" y1="1121.9" x2="-311.3" y2="-131.1"/>
<line x1="1802.5" y1="1070.3" x2="-282.1" y2="-165.5"/>
<line x1="1823.1" y1="1019.4" x2="-253.2" y2="-199.5"/>
<line x1="1843.3" y1="969.3" x2="-224.7" y2="-233.1"/>
<line x1="1863.3" y1="919.9" x2="-196.4" y2="-266.3"/>
<line x1="1882.9" y1="871.2" x2="-168.6" y2="-299.1"/>
<line x1="1902.3" y1="823.2" x2="-141.0" y2="-331.6"/>
<line x1="1921.5" y1="775.9" x2="-113.8" y2="-363.7"/>
<line x1="1940.3" y1="729.2" x2="-86.8" y2="-395.4"/>
<line x1="1958.9" y1="683.1" x2="-60.2" y2="-426.8"/>
<line x1="1977.3" y1="637.7" x2="-33.8" y2="-457.8"/>
<line x1="1995.4" y1="592.9" x2="-7.8" y2="-488.5"/>
<line x1="2013.2" y1="548.7" x2="18.0" y2="-518.8"/>
<line x1="2030.8" y1="505.1" x2="43.4" y2="-548.8"/>
<line x1="2048.2" y1="462.1" x2="68.6" y2="-578.5"/>
<line x1="2065.4" y1="419.6" x2="93.5" y2="-607.9"/>
<line x1="2082.3" y1="377.7" x2="118.2" y2="-636.9"/>
<line x1="2099.0" y1="336.3" x2="142.6" y2="-665.6"/>
<line x1="2115.5" y1="295.5" x2="166.7" y2="-694.0"/>
<line x1="2131.8" y1="255.2" x2="190.6" y2="-722.2"/>
<line x1="2147.8" y1="215.4" x2="214.2" y2="-750.0"/>
<line x1="2163.7" y1="176.2" x2="237.5" y2="-777.5"/>
<line x1="1201.1" y1="2559.2" x2="2163.7" y2="176.2"/>
<line x1="1140.1" y1="2512.1" x2="2115.6" y2="152.3"/>
<line x1="1079.8" y1="2465.7" x2="2067.9" y2="128.7"/>
<line x1="1020.2" y1="2419.7" x2="2020.5" y2="105.3"/>
<line x1="961.3" y1="2374.3" x2="1973.6" y2="82.0"/>
<line x1="903.0" y1="2329.4" x2="1927.1" y2="59.0"/>
<line x1="845.5" y1="2285.1" x2="1880.9" y2="36.1"/>
<line x1="788.5" y1="2241.2" x2="1835.2" y2="13.5"/>
<line x1="732.3" y1="2197.9" x2="1789.8" y2="-9.0"/>
<line x1="676.6" y1="2155.0" x2="1744.8" y2="-31.3"/>
<line x1="621.6" y1="2112.6" x2="1700.1" y2="-53.4"/>
<line x1="567.2" y1="2070.6" x2="1655.8" y2="-75.3"/>
<line x1="513.3" y1="2029.2" x2="1611.9" y2="-97.0"/>
<line x1="460.1" y1="1988.2" x2="1568.3" y2="-118.6"/>
<line x1="407.5" y1="1947.6" x2="1525.1" y2="-140.0"/>
<line x1="355.4" y1="1907.5" x2="1482.2" y2="-161.2"/>
<line x1="303.9" y1="1867.8" x2="1439.7" y2="-182.3"/>
<line x1="252.9" y1="1828.5" x2="1397.5" y2="-203.2"/>
<line x1="202.5" y1="1789.7" x2="1355.6" y2="-223.9"/>
<line x1="152.7" y1="1751.2" x2="1314.1" y2="-244.5"/>
<line x1="103.3" y1="1713.2" x2="1272.9" y2="-264.9"/>
<line x1="54.5" y1="1675.6" x2="1232.0" y2="-285.1"/>
<line x1="6.2" y1="1638.4" x2="1191.5" y2="-305.2"/>
<line x1="-41.6" y1="1601.5" x2="1151.2" y2="-325.1"/>
<line x1="-135.8" y1="1529.0" x2="1071.6" y2="-364.5"/>
<line x1="-182.1" y1="1493.3" x2="1032.3" y2="-384.0"/>
<line x1="-228.0" y1="1457.9" x2="993.3" y2="-403.3"/>
<line x1="-273.4" y1="1422.9" x2="954.6" y2="-422.5"/>
<line x1="-318.4" y1="1388.3" x2="916.1" y2="-441.5"/>
<line x1="-362.9" y1="1354.0" x2="878.0" y2="-460.4"/>
<line x1="-407.0" y1="1320.0" x2="840.1" y2="-479.1"/>
<line x1="-450.6" y1="1286.4" x2="802.6" y2="-497.8"/>
<line x1="-493.8" y1="1253.1" x2="765.3" y2="-516.2"/>
<line x1="-536.5" y1="1220.2" x2="728.2" y2="-534.5"/>
<line x1="-578.9" y1="1187.5" x2="691.5" y2="-552.7"/>
<line x1="-620.8" y1="1155.2" x2="655.0" y2="-570.8"/>
<line x1="-662.3" y1="1123.2" x2="618.8" y2="-588.7"/>
<line x1="-703.5" y1="1091.6" x2="582.9" y2="-606.5"/>
<line x1="-744.2" y1="1060.2" x2="547.2" y2="-624.2"/>
<line x1="-784.5" y1="1029.1" x2="511.8" y2="-641.7"/>
<line x1="-824.5" y1="998.3" x2="476.7" y2="-659.1"/>
<line x1="-864.1" y1="967.8" x2="441.8" y2="-676.4"/>
<line x1="-903.3" y1="937.6" x2="407.1" y2="-693.5"/>
<line x1="-942.1" y1="907.7" x2="372.7" y2="-710.6"/>
<line x1="-980.6" y1="878.0" x2="338.6" y2="-727.5"/>
<line x1="-1018.7" y1="848.7" x2="304.6" y2="-744.3"/>
<line x1="-1056.4" y1="819.6" x2="271.0" y2="-760.9"/>
<line x1="-1093.9" y1="790.7" x2="237.5" y2="-777.5"/>
</g>
<line x1="-89.0" y1="1565.1" x2="1111.3" y2="-344.9" stroke="#a04a5c" stroke-width="2.6"/>
<line x1="1760.6" y1="1174.2" x2="-340.8" y2="-96.2" stroke="#7c9d25" stroke-width="2.6"/>
<path d="M459.7 691.2L462.7 686.7L465.6 682.1L468.6 677.6L471.5 673.1L474.3 668.6L477.2 664.1L480.0 659.5L482.9 655.1L485.7 650.6L488.5 646.1L491.3 641.6L494.1 637.1L496.9 632.6L499.7 628.1L502.4 623.7L505.2 619.2L507.9 614.7L510.7 610.2L513.4 605.7L516.1 601.1L518.8 596.6L521.5 592.1L524.2 587.5L526.9 582.9L529.6 578.4L532.3 573.8L535.0 569.2L537.7 564.6L540.4 560.0L543.1 555.4L545.9 550.9L548.6 546.3L551.3 541.8L554.1 537.2L556.8 532.7L559.6 528.2L562.4 523.7L565.1 519.2L567.9 514.8L570.6 510.3L573.4 505.9L576.2 501.5L578.9 497.1L581.7 492.7L584.4 488.3L587.2 483.9L589.9 479.5L592.7 475.2L595.4 470.8L598.1 466.5L600.9 462.1L603.6 457.8L606.3 453.5L609.0 449.1L611.8 444.8L614.5 440.5L617.2 436.2L619.9 432.0L622.6 427.7L625.3 423.5L628.0 419.2L630.6 415.0L633.3 410.9L636.0 406.7L638.6 402.6L641.3 398.6L643.9 394.6L646.5 390.6L649.1 386.6L651.7 382.7L654.3 378.9L656.9 375.0L659.5 371.2L662.0 367.5L664.5 363.7L667.1 360.0L669.6 356.2L672.1 352.5L674.6 348.7L677.1 344.9L679.6 341.1L682.2 337.3L684.7 333.4L687.2 329.6L689.7 325.7L692.2 321.7L694.7 317.8L697.3 313.8L699.8 309.8L702.3 305.8L704.8 301.8L707.4 297.8L709.9 293.8L712.4 289.7L715.0 285.6L717.5 281.5L720.1 277.3L722.7 273.1L725.3 268.9L727.9 264.5L727.9 264.5L723.5 262.4L719.2 260.3L714.9 258.0L710.6 255.7L706.4 253.4L702.1 251.1L697.9 248.7L693.6 246.3L689.4 243.9L685.2 241.4L681.0 238.9L676.8 236.4L672.6 233.9L668.5 231.4L664.3 228.8L660.1 226.2L656.0 223.5L651.8 220.8L647.6 218.0L643.5 215.2L639.3 212.3L635.2 209.4L631.0 206.5L626.8 203.5L622.7 200.5L618.5 197.5L614.3 194.5L610.1 191.5L605.9 188.6L601.7 185.6L597.5 182.7L593.3 179.8L589.1 177.0L584.9 174.2L580.7 171.5L576.5 168.8L572.2 166.2L568.0 163.6L563.8 161.0L559.6 158.5L555.4 156.0L551.2 153.5L547.0 151.1L542.9 148.6L538.7 146.2L534.5 143.8L530.3 141.4L526.2 139.0L522.0 136.6L517.8 134.2L513.7 131.8L509.5 129.5L505.4 127.1L501.2 124.7L497.1 122.3L493.0 120.0L488.8 117.6L484.7 115.3L480.6 113.0L476.5 110.7L472.4 108.5L468.3 106.3L464.3 104.1L460.2 102.0L456.2 99.9L452.2 97.9L448.2 96.0L444.3 94.1L440.3 92.3L436.4 90.5L432.5 88.8L428.7 87.2L424.8 85.5L421.0 83.9L417.2 82.3L413.4 80.7L409.6 79.1L405.8 77.4L402.0 75.7L398.2 74.0L394.4 72.2L390.6 70.4L386.7 68.5L382.9 66.5L379.0 64.5L375.1 62.4L371.3 60.3L367.4 58.2L363.5 56.0L359.5 53.8L355.6 51.6L351.7 49.4L347.7 47.0L343.8 44.7L339.8 42.3L335.8 39.9L331.8 37.4L327.8 34.9L323.7 32.2L319.6 29.4L319.6 29.4L317.1 33.6L314.6 37.7L312.1 41.7L309.6 45.6L307.0 49.5L304.3 53.3L301.7 57.1L299.1 60.9L296.4 64.6L293.7 68.2L291.0 71.9L288.2 75.5L285.5 79.1L282.7 82.7L279.9 86.2L277.0 89.7L274.1 93.2L271.2 96.5L268.3 99.9L265.3 103.2L262.2 106.4L259.1 109.6L256.0 112.8L252.9 116.0L249.7 119.1L246.5 122.3L243.3 125.5L240.1 128.7L237.0 131.9L233.8 135.2L230.6 138.5L227.5 141.9L224.4 145.4L221.3 148.9L218.2 152.5L215.2 156.1L212.2 159.8L209.2 163.5L206.3 167.3L203.3 171.1L200.4 175.0L197.5 178.9L194.6 182.8L191.7 186.7L188.9 190.7L186.0 194.6L183.1 198.6L180.2 202.6L177.3 206.6L174.5 210.5L171.6 214.5L168.7 218.5L165.8 222.5L162.9 226.6L160.0 230.6L157.1 234.6L154.2 238.7L151.3 242.7L148.5 246.8L145.6 250.9L142.8 255.1L140.0 259.2L137.2 263.4L134.5 267.7L131.8 272.0L129.2 276.3L126.6 280.6L124.0 285.0L121.5 289.5L119.1 293.9L116.6 298.4L114.2 302.9L111.9 307.5L109.5 312.0L107.2 316.5L104.8 321.1L102.5 325.6L100.1 330.0L97.7 334.5L95.2 338.9L92.7 343.3L90.2 347.6L87.5 351.9L84.9 356.2L82.2 360.5L79.4 364.7L76.6 368.9L73.8 373.0L70.9 377.2L68.0 381.4L65.1 385.5L62.1 389.6L59.1 393.7L56.0 397.8L52.9 401.9L49.8 406.0L46.6 410.0L43.3 414.1L39.9 418.1L36.4 422.0L36.4 422.0L41.0 424.8L45.4 427.6L49.7 430.3L54.0 432.9L58.2 435.6L62.3 438.2L66.5 440.8L70.6 443.4L74.6 446.0L78.7 448.6L82.7 451.1L86.6 453.7L90.6 456.2L94.5 458.8L98.4 461.3L102.3 463.8L106.1 466.3L109.9 468.7L113.6 471.2L117.3 473.6L121.0 476.0L124.6 478.4L128.2 480.8L131.8 483.2L135.4 485.6L139.0 488.0L142.6 490.4L146.2 492.9L149.9 495.3L153.6 497.8L157.3 500.2L161.1 502.8L165.0 505.3L168.9 507.8L172.9 510.4L176.9 513.0L180.9 515.7L185.0 518.3L189.2 521.0L193.4 523.6L197.6 526.3L201.8 529.0L206.0 531.7L210.3 534.5L214.6 537.2L218.9 539.9L223.2 542.7L227.5 545.4L231.8 548.1L236.1 550.9L240.4 553.6L244.7 556.4L249.0 559.1L253.4 561.9L257.7 564.6L262.0 567.4L266.4 570.2L270.8 572.9L275.2 575.7L279.6 578.5L284.0 581.3L288.4 584.1L292.9 586.9L297.4 589.7L301.9 592.6L306.5 595.4L311.1 598.2L315.7 601.1L320.3 603.9L325.0 606.8L329.7 609.7L334.4 612.5L339.0 615.4L343.7 618.3L348.4 621.1L353.1 624.0L357.8 626.8L362.4 629.7L367.0 632.5L371.6 635.3L376.2 638.1L380.7 641.0L385.2 643.8L389.7 646.6L394.1 649.3L398.6 652.1L403.0 654.9L407.4 657.7L411.8 660.5L416.2 663.3L420.6 666.1L425.0 668.8L429.4 671.6L433.7 674.4L438.1 677.2L442.4 680.0L446.8 682.8L451.1 685.6L455.4 688.4L459.7 691.2Z" fill="#b3b3b3"/>
<g clip-path="url(#ac)">
<ellipse cx="385.9" cy="361.2" rx="354.7" ry="341.6" fill="url(#a0)"/>
<ellipse cx="386.1" cy="361.1" rx="352.0" ry="339.0" fill="url(#a1)"/>
<ellipse cx="386.2" cy="361.0" rx="349.3" ry="336.4" fill="url(#a2)"/>
<ellipse cx="386.3" cy="360.9" rx="346.6" ry="333.8" fill="url(#a3)"/>
<ellipse cx="386.4" cy="360.8" rx="344.0" ry="331.3" fill="url(#a4)"/>
<ellipse cx="386.4" cy="360.6" rx="341.3" ry="328.8" fill="url(#a5)"/>
<ellipse cx="386.5" cy="360.4" rx="338.8" ry="326.3" fill="url(#a6)"/>
<ellipse cx="386.5" cy="360.3" rx="336.2" ry="323.8" fill="url(#a7)"/>
<ellipse cx="386.6" cy="360.1" rx="333.6" ry="321.3" fill="url(#a8)"/>
<ellipse cx="386.6" cy="359.9" rx="331.1" ry="318.9" fill="url(#a8)"/>
<ellipse cx="386.6" cy="359.6" rx="328.6" ry="316.4" fill="url(#a9)"/>
<ellipse cx="386.6" cy="359.4" rx="326.1" ry="314.0" fill="url(#a9)"/>
<ellipse cx="386.6" cy="359.2" rx="323.5" ry="311.6" fill="url(#a10)"/>
<ellipse cx="386.6" cy="358.9" rx="321.1" ry="309.2" fill="url(#a10)"/>
<ellipse cx="386.6" cy="358.7" rx="318.6" ry="306.8" fill="url(#a11)"/>
<ellipse cx="386.6" cy="358.4" rx="316.1" ry="304.4" fill="url(#a11)"/>
<ellipse cx="386.5" cy="358.1" rx="313.7" ry="302.0" fill="url(#a12)"/>
<ellipse cx="386.5" cy="357.8" rx="311.2" ry="299.7" fill="url(#a13)"/>
<ellipse cx="386.4" cy="357.5" rx="308.8" ry="297.3" fill="url(#a14)"/>
<ellipse cx="386.4" cy="357.2" rx="306.4" ry="295.0" fill="url(#a15)"/>
<ellipse cx="386.3" cy="356.9" rx="304.0" ry="292.7" fill="url(#a16)"/>
<ellipse cx="386.2" cy="356.5" rx="301.6" ry="290.4" fill="url(#a17)"/>
<ellipse cx="386.1" cy="356.2" rx="299.3" ry="288.1" fill="url(#a18)"/>
<ellipse cx="386.0" cy="355.7" rx="296.9" ry="285.8" fill="url(#a19)"/>
<ellipse cx="385.8" cy="355.3" rx="294.6" ry="283.6" fill="url(#a20)"/>
<ellipse cx="385.7" cy="354.8" rx="292.4" ry="281.4" fill="url(#a21)"/>
<ellipse cx="385.5" cy="354.3" rx="290.1" ry="279.2" fill="url(#a22)"/>
<ellipse cx="385.2" cy="353.8" rx="287.9" ry="277.1" fill="url(#a23)"/>
<ellipse cx="385.0" cy="353.2" rx="285.7" ry="275.0" fill="url(#a24)"/>
<ellipse cx="384.7" cy="352.6" rx="283.6" ry="272.9" fill="url(#a25)"/>
<ellipse cx="384.4" cy="352.0" rx="281.4" ry="270.8" fill="url(#a26)"/>
<ellipse cx="384.1" cy="351.3" rx="279.3" ry="268.7" fill="url(#a26)"/>
<ellipse cx="383.8" cy="350.6" rx="277.2" ry="266.6" fill="url(#a27)"/>
<ellipse cx="383.5" cy="349.9" rx="275.0" ry="264.6" fill="url(#a26)"/>
<ellipse cx="383.2" cy="349.3" rx="272.9" ry="262.5" fill="url(#a28)"/>
<ellipse cx="382.9" cy="348.6" rx="270.7" ry="260.4" fill="url(#a25)"/>
<ellipse cx="382.6" cy="348.0" rx="268.6" ry="258.3" fill="url(#a29)"/>
<ellipse cx="382.3" cy="347.4" rx="266.3" ry="256.1" fill="url(#a22)"/>
<ellipse cx="382.1" cy="346.8" rx="264.1" ry="253.9" fill="url(#a30)"/>
<ellipse cx="381.9" cy="346.3" rx="261.7" ry="251.6" fill="url(#a31)"/>
<ellipse cx="381.8" cy="345.9" rx="259.4" ry="249.3" fill="url(#a16)"/>
<ellipse cx="381.7" cy="345.6" rx="256.9" ry="247.0" fill="url(#a11)"/>
<ellipse cx="381.6" cy="345.4" rx="254.4" ry="244.5" fill="url(#a8)"/>
<ellipse cx="381.7" cy="345.2" rx="251.8" ry="242.1" fill="url(#a3)"/>
<ellipse cx="381.7" cy="345.2" rx="249.2" ry="239.5" fill="url(#a32)"/>
<ellipse cx="381.9" cy="345.2" rx="246.5" ry="236.9" fill="url(#a33)"/>
<ellipse cx="382.1" cy="345.3" rx="243.7" ry="234.3" fill="url(#a34)"/>
<ellipse cx="382.3" cy="345.4" rx="240.9" ry="231.6" fill="url(#a35)"/>
<ellipse cx="382.5" cy="345.6" rx="238.1" ry="228.9" fill="url(#a36)"/>
<ellipse cx="382.8" cy="345.9" rx="235.3" ry="226.2" fill="url(#a37)"/>
<ellipse cx="383.1" cy="346.2" rx="232.4" ry="223.5" fill="url(#a38)"/>
<ellipse cx="383.4" cy="346.5" rx="229.5" ry="220.7" fill="url(#a39)"/>
<ellipse cx="383.8" cy="346.8" rx="226.7" ry="218.0" fill="url(#a38)"/>
<ellipse cx="384.1" cy="347.1" rx="223.8" ry="215.3" fill="url(#a38)"/>
<ellipse cx="384.4" cy="347.4" rx="221.0" ry="212.6" fill="url(#a36)"/>
<ellipse cx="384.7" cy="347.7" rx="218.2" ry="209.9" fill="url(#a40)"/>
<ellipse cx="384.9" cy="347.9" rx="215.4" ry="207.2" fill="url(#a41)"/>
<ellipse cx="385.2" cy="348.1" rx="212.7" ry="204.6" fill="url(#a34)"/>
<ellipse cx="385.4" cy="348.3" rx="210.0" ry="202.0" fill="url(#a42)"/>
<ellipse cx="385.6" cy="348.5" rx="207.3" ry="199.4" fill="url(#a43)"/>
<ellipse cx="385.7" cy="348.6" rx="204.6" ry="196.9" fill="url(#a0)"/>
<ellipse cx="385.9" cy="348.6" rx="202.0" ry="194.3" fill="url(#a1)"/>
<ellipse cx="386.0" cy="348.7" rx="199.4" ry="191.8" fill="url(#a2)"/>
<ellipse cx="386.1" cy="348.7" rx="196.8" ry="189.3" fill="url(#a3)"/>
<ellipse cx="386.2" cy="348.7" rx="194.2" ry="186.9" fill="url(#a4)"/>
<ellipse cx="386.3" cy="348.7" rx="191.7" ry="184.4" fill="url(#a5)"/>
<ellipse cx="386.3" cy="348.6" rx="189.1" ry="182.0" fill="url(#a6)"/>
<ellipse cx="386.4" cy="348.5" rx="186.6" ry="179.5" fill="url(#a7)"/>
<ellipse cx="386.4" cy="348.4" rx="184.1" ry="177.1" fill="url(#a8)"/>
<ellipse cx="386.4" cy="348.4" rx="181.5" ry="174.7" fill="url(#a8)"/>
<ellipse cx="386.4" cy="348.2" rx="179.0" ry="172.3" fill="url(#a9)"/>
<ellipse cx="386.5" cy="348.1" rx="176.5" ry="169.9" fill="url(#a9)"/>
<ellipse cx="386.5" cy="348.0" rx="174.0" ry="167.5" fill="url(#a10)"/>
<ellipse cx="386.5" cy="347.9" rx="171.6" ry="165.1" fill="url(#a10)"/>
<ellipse cx="386.4" cy="347.7" rx="169.1" ry="162.7" fill="url(#a11)"/>
<ellipse cx="386.4" cy="347.6" rx="166.6" ry="160.3" fill="url(#a11)"/>
<ellipse cx="386.4" cy="347.4" rx="164.1" ry="157.9" fill="url(#a12)"/>
<ellipse cx="386.4" cy="347.2" rx="161.7" ry="155.6" fill="url(#a13)"/>
<ellipse cx="386.3" cy="347.0" rx="159.2" ry="153.2" fill="url(#a14)"/>
<ellipse cx="386.2" cy="346.8" rx="156.8" ry="150.8" fill="url(#a15)"/>
<ellipse cx="386.2" cy="346.6" rx="154.3" ry="148.5" fill="url(#a16)"/>
<ellipse cx="386.1" cy="346.4" rx="151.9" ry="146.1" fill="url(#a17)"/>
<ellipse cx="386.0" cy="346.1" rx="149.5" ry="143.8" fill="url(#a18)"/>
<ellipse cx="385.9" cy="345.8" rx="147.1" ry="141.5" fill="url(#a19)"/>
<ellipse cx="385.7" cy="345.4" rx="144.7" ry="139.2" fill="url(#a20)"/>
<ellipse cx="385.5" cy="345.1" rx="142.3" ry="136.9" fill="url(#a21)"/>
<ellipse cx="385.3" cy="344.6" rx="139.9" ry="134.6" fill="url(#a22)"/>
<ellipse cx="385.1" cy="344.2" rx="137.6" ry="132.3" fill="url(#a23)"/>
<ellipse cx="384.9" cy="343.7" rx="135.2" ry="130.0" fill="url(#a24)"/>
<ellipse cx="384.6" cy="343.2" rx="132.9" ry="127.8" fill="url(#a25)"/>
<ellipse cx="384.3" cy="342.6" rx="130.5" ry="125.5" fill="url(#a26)"/>
<ellipse cx="384.0" cy="342.1" rx="128.2" ry="123.3" fill="url(#a26)"/>
<ellipse cx="383.7" cy="341.5" rx="125.9" ry="121.0" fill="url(#a27)"/>
<ellipse cx="383.4" cy="340.9" rx="123.5" ry="118.8" fill="url(#a26)"/>
<ellipse cx="383.1" cy="340.3" rx="121.2" ry="116.5" fill="url(#a28)"/>
<ellipse cx="382.8" cy="339.7" rx="118.8" ry="114.2" fill="url(#a25)"/>
<ellipse cx="382.5" cy="339.2" rx="116.4" ry="111.9" fill="url(#a29)"/>
<ellipse cx="382.2" cy="338.7" rx="114.0" ry="109.6" fill="url(#a22)"/>
<ellipse cx="382.0" cy="338.2" rx="111.6" ry="107.3" fill="url(#a30)"/>
<ellipse cx="381.8" cy="337.9" rx="109.2" ry="104.9" fill="url(#a31)"/>
<ellipse cx="381.7" cy="337.6" rx="106.7" ry="102.5" fill="url(#a16)"/>
<ellipse cx="381.6" cy="337.4" rx="104.2" ry="100.1" fill="url(#a11)"/>
<ellipse cx="381.6" cy="337.2" rx="101.7" ry="97.7" fill="url(#a8)"/>
<ellipse cx="381.6" cy="337.2" rx="99.1" ry="95.2" fill="url(#a3)"/>
<ellipse cx="381.7" cy="337.3" rx="96.5" ry="92.8" fill="url(#a32)"/>
<ellipse cx="381.8" cy="337.4" rx="93.9" ry="90.3" fill="url(#a33)"/>
<ellipse cx="382.0" cy="337.6" rx="91.3" ry="87.8" fill="url(#a34)"/>
<ellipse cx="382.2" cy="337.9" rx="88.7" ry="85.2" fill="url(#a35)"/>
<ellipse cx="382.5" cy="338.3" rx="86.1" ry="82.7" fill="url(#a36)"/>
<ellipse cx="382.8" cy="338.6" rx="83.4" ry="80.2" fill="url(#a37)"/>
<ellipse cx="383.1" cy="339.1" rx="80.8" ry="77.6" fill="url(#a38)"/>
<ellipse cx="383.4" cy="339.5" rx="78.1" ry="75.1" fill="url(#a39)"/>
<ellipse cx="383.7" cy="340.0" rx="75.5" ry="72.6" fill="url(#a38)"/>
<ellipse cx="384.1" cy="340.4" rx="72.9" ry="70.1" fill="url(#a38)"/>
<ellipse cx="384.4" cy="340.8" rx="70.3" ry="67.6" fill="url(#a36)"/>
<ellipse cx="384.6" cy="341.2" rx="67.7" ry="65.1" fill="url(#a40)"/>
<ellipse cx="384.9" cy="341.6" rx="65.1" ry="62.6" fill="url(#a41)"/>
<ellipse cx="385.2" cy="341.9" rx="62.5" ry="60.1" fill="url(#a34)"/>
<ellipse cx="385.4" cy="342.2" rx="60.0" ry="57.7" fill="url(#a42)"/>
<ellipse cx="385.6" cy="342.5" rx="57.4" ry="55.2" fill="url(#a43)"/>
<ellipse cx="385.7" cy="342.7" rx="54.9" ry="52.8" fill="url(#a0)"/>
<ellipse cx="385.9" cy="342.9" rx="52.3" ry="50.3" fill="url(#a1)"/>
<ellipse cx="386.0" cy="343.1" rx="49.8" ry="47.9" fill="url(#a2)"/>
<ellipse cx="386.1" cy="343.2" rx="47.3" ry="45.5" fill="url(#a3)"/>
<ellipse cx="386.2" cy="343.3" rx="44.8" ry="43.1" fill="url(#a4)"/>
<ellipse cx="386.3" cy="343.4" rx="42.3" ry="40.7" fill="url(#a5)"/>
<ellipse cx="386.3" cy="343.5" rx="39.8" ry="38.3" fill="url(#a6)"/>
<ellipse cx="386.4" cy="343.5" rx="37.3" ry="35.9" fill="url(#a7)"/>
<ellipse cx="386.4" cy="343.5" rx="34.8" ry="33.5" fill="url(#a8)"/>
<ellipse cx="386.4" cy="343.6" rx="32.3" ry="31.1" fill="url(#a8)"/>
<ellipse cx="386.5" cy="343.6" rx="29.8" ry="28.7" fill="url(#a9)"/>
<ellipse cx="386.5" cy="343.6" rx="27.3" ry="26.3" fill="url(#a9)"/>
<ellipse cx="386.5" cy="343.6" rx="24.9" ry="23.9" fill="url(#a10)"/>
<ellipse cx="386.5" cy="343.5" rx="22.4" ry="21.5" fill="url(#a10)"/>
<ellipse cx="386.5" cy="343.5" rx="19.9" ry="19.1" fill="url(#a11)"/>
<ellipse cx="386.4" cy="343.5" rx="17.4" ry="16.7" fill="url(#a11)"/>
<ellipse cx="386.4" cy="343.4" rx="14.9" ry="14.3" fill="url(#a12)"/>
<ellipse cx="386.4" cy="343.3" rx="12.4" ry="12.0" fill="url(#a13)"/>
<ellipse cx="386.3" cy="343.2" rx="9.9" ry="9.6" fill="url(#a14)"/>
<ellipse cx="386.3" cy="343.1" rx="7.5" ry="7.2" fill="url(#a15)"/>
<ellipse cx="386.2" cy="343.0" rx="5.0" ry="4.8" fill="url(#a16)"/>
<ellipse cx="386.1" cy="342.9" rx="2.5" ry="2.4" fill="url(#a13)"/>
</g>
<path d="M925.6 988.1L925.9 980.9L929.6 976.9L934.9 974.1L940.1 971.2L944.9 967.9L949.0 964.0L952.0 959.1L953.9 953.4L954.7 947.0L955.0 940.2L955.0 933.4L955.1 926.7L958.5 922.3L963.8 919.1L969.1 915.9L974.1 912.3L978.3 908.3L981.6 903.6L983.8 898.3L984.9 892.5L985.2 886.4L985.2 880.1L985.1 873.9L985.7 868.1L990.7 864.5L996.0 860.8L1001.3 857.1L1006.1 853.1L1010.2 848.8L1013.4 844.1L1015.5 839.0L1016.6 833.5L1017.1 827.9L1017.1 822.3L1017.0 816.6L1017.1 811.1L1019.8 806.5L1024.8 802.4L1029.9 798.3L1034.9 794.1L1039.6 789.8L1043.7 785.3L1047.0 780.7L1049.6 775.9L1051.5 770.9L1052.7 765.9L1053.5 760.8L1054.0 755.8L1054.4 750.7L1054.8 745.8L1055.3 740.9L1056.1 736.0L1060.3 731.6L1064.5 727.1L1068.8 722.6L1072.9 718.0L1077.0 713.5L1080.9 708.9L1084.5 704.2L1088.0 699.6L1091.3 694.9L1094.4 690.2L1097.3 685.5L1100.1 680.8L1102.7 676.1L1105.3 671.4L1107.9 666.8L1110.4 662.1L1112.9 657.5L1115.3 652.8L1117.8 648.2L1120.3 643.5L1122.7 638.9L1125.1 634.3L1127.5 629.7L1129.8 625.1L1131.9 620.5L1133.9 616.0L1135.8 611.5L1137.4 607.0L1138.7 602.7L1139.8 598.3L1140.7 594.1L1141.4 589.9L1141.9 585.8L1142.3 581.7L1142.7 577.7L1143.1 573.7L1147.4 568.8L1152.0 563.9L1156.9 558.9L1161.8 553.8L1166.7 548.8L1171.2 543.8L1175.2 538.9L1178.5 534.2L1180.8 529.7L1182.2 525.5L1182.7 521.6L1182.4 518.0L1182.4 518.0L1180.3 514.4L1177.4 511.1L1173.7 508.1L1168.9 505.3L1163.3 502.9L1157.0 500.7L1150.2 498.7L1143.1 496.8L1136.0 495.0L1129.0 493.2L1122.2 491.3L1115.8 489.4L1113.0 486.0L1110.3 482.6L1107.5 479.2L1104.6 475.8L1101.6 472.5L1098.3 469.2L1094.8 466.0L1091.1 462.9L1087.1 459.9L1083.0 456.9L1078.7 454.0L1074.3 451.2L1069.8 448.5L1065.2 445.7L1060.6 443.0L1056.0 440.3L1051.3 437.7L1046.6 435.0L1042.0 432.3L1037.3 429.6L1032.7 427.0L1028.0 424.4L1023.3 421.7L1018.5 419.2L1013.7 416.7L1008.8 414.2L1003.7 411.9L998.5 409.7L993.2 407.6L987.7 405.6L982.1 403.8L976.4 402.1L970.6 400.4L964.8 398.9L959.0 397.4L953.3 395.8L950.1 392.2L947.0 388.5L944.1 384.6L941.1 380.6L938.0 376.7L934.7 372.9L931.1 369.5L927.1 366.4L922.5 363.8L917.4 361.7L911.9 360.2L906.0 359.1L900.0 358.3L893.9 357.6L887.9 356.8L883.4 354.4L880.5 350.0L877.8 345.5L874.9 341.0L871.7 336.7L868.1 333.0L863.9 330.0L859.1 327.8L853.8 326.5L848.1 325.8L842.2 325.5L836.3 325.2L830.6 324.9L827.3 320.7L824.4 315.8L821.4 310.8L818.2 306.2L814.5 302.3L810.4 299.2L805.6 297.3L800.4 296.3L794.9 296.0L789.3 296.1L783.7 296.2L779.1 294.5L775.9 289.4L772.7 284.2L769.4 279.2L765.8 274.8L761.7 271.4L757.2 269.1L752.3 268.1L747.1 268.0L741.8 268.3L736.6 268.7L731.9 267.6L728.5 262.3L728.5 262.3L725.6 267.5L722.8 272.7L720.0 277.7L717.7 280.9L715.5 283.9L713.2 287.0L710.9 290.0L708.6 293.2L706.3 296.4L703.9 299.6L701.6 303.0L699.1 306.4L696.7 309.9L694.2 313.6L691.7 317.3L689.2 321.1L686.6 324.9L684.1 328.8L681.5 332.8L678.9 336.9L676.3 341.0L673.6 345.1L671.0 349.3L668.4 353.4L665.7 357.6L663.0 361.9L660.4 366.1L657.7 370.3L655.0 374.6L652.4 378.8L649.7 383.1L647.0 387.3L644.3 391.6L641.6 395.9L638.9 400.2L636.2 404.5L633.5 408.8L630.8 413.1L628.1 417.5L625.4 421.9L622.7 426.3L620.0 430.8L617.2 435.3L614.5 439.8L611.8 444.4L609.0 449.0L606.3 453.7L603.6 458.4L600.9 463.1L598.2 467.9L595.5 472.6L592.8 477.4L590.1 482.3L587.4 487.1L584.8 491.9L582.1 496.7L579.5 501.3L576.7 505.2L573.9 509.0L571.1 512.8L568.2 516.6L565.4 520.4L562.5 524.3L559.6 528.2L556.7 532.1L553.8 536.2L550.9 540.4L548.0 544.8L545.2 549.2L542.4 553.8L539.7 558.5L537.0 563.3L534.4 568.2L531.9 573.1L529.4 578.0L526.9 582.9L524.4 587.8L522.0 592.6L519.0 596.8L515.9 600.9L512.6 605.0L509.4 609.1L506.1 613.3L502.9 617.5L499.7 621.9L496.7 626.4L493.8 631.0L491.0 635.6L488.5 640.4L486.0 645.2L483.7 649.9L481.5 654.7L479.3 659.4L477.1 664.0L473.9 668.5L470.3 672.9L466.7 677.4L463.1 682.0L459.5 686.6L456.1 691.3L456.1 691.3L461.1 694.2L466.3 697.0L471.5 699.8L476.7 702.6L481.8 705.3L486.6 708.1L490.5 711.1L494.4 714.0L498.3 717.1L502.3 720.1L506.5 723.1L510.8 726.2L515.3 729.1L519.9 732.1L524.6 734.9L529.4 737.7L534.3 740.4L539.2 743.1L544.0 745.7L548.8 748.3L553.6 750.9L558.2 753.6L562.5 756.8L566.9 760.0L571.3 763.2L575.8 766.5L580.3 769.7L584.9 773.0L589.5 776.1L594.2 779.3L598.8 782.3L603.5 785.3L608.2 788.1L612.9 790.9L617.5 793.7L622.1 796.3L626.7 798.9L631.3 801.5L635.8 804.1L640.3 806.6L644.8 809.2L649.3 811.8L653.7 814.3L658.5 817.6L663.2 820.8L668.0 824.1L672.9 827.5L677.7 830.8L682.6 834.1L687.5 837.4L692.4 840.8L697.3 844.1L702.2 847.3L707.1 850.6L712.0 853.9L716.9 857.1L721.8 860.3L726.7 863.5L731.5 866.6L736.4 869.7L741.2 872.9L746.1 876.0L751.0 879.1L755.8 882.2L760.6 885.3L765.5 888.4L770.3 891.4L775.2 894.5L780.0 897.6L784.9 900.7L789.8 903.8L794.6 906.9L799.5 910.0L804.4 913.1L809.3 916.2L814.1 919.3L819.0 922.4L823.9 925.5L828.7 928.5L833.5 931.6L838.3 934.6L843.1 937.5L847.8 940.5L852.5 943.4L857.1 946.2L861.7 949.0L866.2 951.7L870.7 954.4L875.0 957.0L879.3 959.5L883.6 962.0L887.7 964.4L891.9 966.8L895.9 969.1L900.0 971.4L904.0 973.7L908.2 976.2L913.9 980.0L919.7 984.0L925.6 988.1Z" fill="#b3b3b3"/>
<g clip-path="url(#bc)">
<ellipse cx="976.0" cy="611.9" rx="533.4" ry="531.2" fill="url(#b0)"/>
<ellipse cx="975.1" cy="611.4" rx="528.9" ry="526.6" fill="url(#b1)"/>
<ellipse cx="973.8" cy="611.0" rx="523.7" ry="521.5" fill="url(#b2)"/>
<ellipse cx="972.2" cy="610.6" rx="518.1" ry="516.0" fill="url(#b3)"/>
<ellipse cx="970.3" cy="610.2" rx="512.3" ry="510.2" fill="url(#b4)"/>
<ellipse cx="968.4" cy="609.9" rx="506.4" ry="504.3" fill="url(#b4)"/>
<ellipse cx="966.6" cy="609.6" rx="500.6" ry="498.6" fill="url(#b5)"/>
<ellipse cx="964.9" cy="609.3" rx="495.0" ry="493.1" fill="url(#b6)"/>
<ellipse cx="966.5" cy="608.6" rx="494.0" ry="492.0" fill="url(#b7)"/>
<ellipse cx="968.2" cy="607.9" rx="493.1" ry="491.1" fill="url(#b7)"/>
<ellipse cx="970.1" cy="607.1" rx="492.3" ry="490.2" fill="url(#b8)"/>
<ellipse cx="971.8" cy="606.4" rx="491.4" ry="489.2" fill="url(#b9)"/>
<ellipse cx="973.4" cy="605.7" rx="490.2" ry="487.9" fill="url(#b10)"/>
<ellipse cx="974.6" cy="605.1" rx="488.4" ry="486.2" fill="url(#b11)"/>
<ellipse cx="975.4" cy="604.5" rx="486.1" ry="483.8" fill="url(#b12)"/>
<ellipse cx="975.6" cy="603.9" rx="483.1" ry="480.8" fill="url(#b13)"/>
<ellipse cx="975.3" cy="603.4" rx="479.4" ry="477.1" fill="url(#b0)"/>
<ellipse cx="974.4" cy="603.1" rx="475.0" ry="472.7" fill="url(#b1)"/>
<ellipse cx="973.1" cy="602.7" rx="470.0" ry="467.8" fill="url(#b2)"/>
<ellipse cx="971.5" cy="602.5" rx="464.7" ry="462.5" fill="url(#b3)"/>
<ellipse cx="969.6" cy="602.3" rx="459.1" ry="456.9" fill="url(#b4)"/>
<ellipse cx="967.7" cy="602.1" rx="453.5" ry="451.4" fill="url(#b4)"/>
<ellipse cx="965.9" cy="601.9" rx="448.0" ry="445.9" fill="url(#b5)"/>
<ellipse cx="964.2" cy="601.7" rx="442.7" ry="440.6" fill="url(#b6)"/>
<ellipse cx="965.8" cy="601.0" rx="441.4" ry="439.3" fill="url(#b7)"/>
<ellipse cx="967.5" cy="600.3" rx="440.3" ry="438.2" fill="url(#b7)"/>
<ellipse cx="969.3" cy="599.5" rx="439.2" ry="437.0" fill="url(#b8)"/>
<ellipse cx="971.1" cy="598.8" rx="438.0" ry="435.8" fill="url(#b9)"/>
<ellipse cx="972.6" cy="598.1" rx="436.6" ry="434.3" fill="url(#b10)"/>
<ellipse cx="973.8" cy="597.4" rx="434.7" ry="432.4" fill="url(#b11)"/>
<ellipse cx="974.6" cy="596.8" rx="432.3" ry="429.9" fill="url(#b12)"/>
<ellipse cx="974.8" cy="596.3" rx="429.2" ry="426.9" fill="url(#b13)"/>
<ellipse cx="974.5" cy="595.9" rx="425.6" ry="423.2" fill="url(#b0)"/>
<ellipse cx="973.7" cy="595.6" rx="421.3" ry="419.0" fill="url(#b1)"/>
<ellipse cx="972.3" cy="595.4" rx="416.5" ry="414.2" fill="url(#b2)"/>
<ellipse cx="970.7" cy="595.3" rx="411.4" ry="409.2" fill="url(#b3)"/>
<ellipse cx="968.9" cy="595.2" rx="406.1" ry="403.9" fill="url(#b4)"/>
<ellipse cx="967.0" cy="595.1" rx="400.8" ry="398.6" fill="url(#b4)"/>
<ellipse cx="965.1" cy="595.1" rx="395.5" ry="393.4" fill="url(#b5)"/>
<ellipse cx="963.4" cy="595.0" rx="390.4" ry="388.4" fill="url(#b6)"/>
<ellipse cx="965.1" cy="594.3" rx="388.9" ry="386.9" fill="url(#b7)"/>
<ellipse cx="966.8" cy="593.5" rx="387.6" ry="385.4" fill="url(#b7)"/>
<ellipse cx="968.6" cy="592.8" rx="386.2" ry="384.0" fill="url(#b8)"/>
<ellipse cx="970.4" cy="592.0" rx="384.8" ry="382.6" fill="url(#b9)"/>
<ellipse cx="971.9" cy="591.3" rx="383.1" ry="380.8" fill="url(#b10)"/>
<ellipse cx="973.1" cy="590.7" rx="381.1" ry="378.8" fill="url(#b11)"/>
<ellipse cx="973.9" cy="590.1" rx="378.5" ry="376.2" fill="url(#b12)"/>
<ellipse cx="974.1" cy="589.7" rx="375.4" ry="373.1" fill="url(#b13)"/>
<ellipse cx="973.8" cy="589.3" rx="371.8" ry="369.5" fill="url(#b0)"/>
<ellipse cx="973.0" cy="589.1" rx="367.7" ry="365.4" fill="url(#b1)"/>
<ellipse cx="971.7" cy="589.0" rx="363.1" ry="360.8" fill="url(#b2)"/>
<ellipse cx="970.0" cy="589.0" rx="358.2" ry="356.0" fill="url(#b3)"/>
<ellipse cx="968.2" cy="589.0" rx="353.1" ry="351.0" fill="url(#b4)"/>
<ellipse cx="966.3" cy="589.0" rx="348.1" ry="346.0" fill="url(#b4)"/>
<ellipse cx="964.5" cy="589.1" rx="343.1" ry="341.1" fill="url(#b5)"/>
<ellipse cx="962.8" cy="589.1" rx="338.3" ry="336.3" fill="url(#b6)"/>
<ellipse cx="964.4" cy="588.4" rx="336.5" ry="334.5" fill="url(#b7)"/>
<ellipse cx="966.2" cy="587.6" rx="334.9" ry="332.9" fill="url(#b7)"/>
<ellipse cx="968.0" cy="586.9" rx="333.3" ry="331.2" fill="url(#b8)"/>
<ellipse cx="969.7" cy="586.1" rx="331.6" ry="329.5" fill="url(#b9)"/>
<ellipse cx="971.3" cy="585.4" rx="329.7" ry="327.6" fill="url(#b10)"/>
<ellipse cx="972.5" cy="584.8" rx="327.5" ry="325.3" fill="url(#b11)"/>
<ellipse cx="973.3" cy="584.3" rx="324.8" ry="322.7" fill="url(#b12)"/>
<ellipse cx="973.5" cy="583.9" rx="321.7" ry="319.5" fill="url(#b13)"/>
<ellipse cx="973.2" cy="583.6" rx="318.1" ry="316.0" fill="url(#b0)"/>
<ellipse cx="972.4" cy="583.5" rx="314.1" ry="312.0" fill="url(#b1)"/>
<ellipse cx="971.1" cy="583.5" rx="309.7" ry="307.6" fill="url(#b2)"/>
<ellipse cx="969.5" cy="583.5" rx="305.0" ry="303.0" fill="url(#b3)"/>
<ellipse cx="967.7" cy="583.7" rx="300.2" ry="298.3" fill="url(#b4)"/>
<ellipse cx="965.8" cy="583.8" rx="295.4" ry="293.5" fill="url(#b4)"/>
<ellipse cx="964.0" cy="584.0" rx="290.7" ry="288.9" fill="url(#b5)"/>
<ellipse cx="962.3" cy="584.1" rx="286.1" ry="284.3" fill="url(#b6)"/>
<ellipse cx="963.9" cy="583.4" rx="284.1" ry="282.3" fill="url(#b7)"/>
<ellipse cx="965.7" cy="582.6" rx="282.3" ry="280.4" fill="url(#b7)"/>
<ellipse cx="967.5" cy="581.9" rx="280.4" ry="278.5" fill="url(#b8)"/>
<ellipse cx="969.2" cy="581.1" rx="278.4" ry="276.6" fill="url(#b9)"/>
<ellipse cx="970.8" cy="580.4" rx="276.3" ry="274.4" fill="url(#b10)"/>
<ellipse cx="972.0" cy="579.8" rx="273.9" ry="272.0" fill="url(#b11)"/>
<ellipse cx="972.7" cy="579.3" rx="271.1" ry="269.2" fill="url(#b12)"/>
<ellipse cx="973.0" cy="579.0" rx="268.0" ry="266.1" fill="url(#b13)"/>
<ellipse cx="972.7" cy="578.8" rx="264.4" ry="262.6" fill="url(#b0)"/>
<ellipse cx="971.9" cy="578.7" rx="260.5" ry="258.7" fill="url(#b1)"/>
<ellipse cx="970.6" cy="578.8" rx="256.3" ry="254.5" fill="url(#b2)"/>
<ellipse cx="969.0" cy="579.0" rx="251.9" ry="250.1" fill="url(#b3)"/>
<ellipse cx="967.2" cy="579.2" rx="247.3" ry="245.7" fill="url(#b4)"/>
<ellipse cx="965.3" cy="579.4" rx="242.8" ry="241.2" fill="url(#b4)"/>
<ellipse cx="963.5" cy="579.7" rx="238.3" ry="236.8" fill="url(#b5)"/>
<ellipse cx="961.9" cy="579.9" rx="234.0" ry="232.5" fill="url(#b6)"/>
<ellipse cx="963.5" cy="579.2" rx="231.8" ry="230.3" fill="url(#b7)"/>
<ellipse cx="965.2" cy="578.5" rx="229.7" ry="228.1" fill="url(#b7)"/>
<ellipse cx="967.0" cy="577.7" rx="227.5" ry="226.0" fill="url(#b8)"/>
<ellipse cx="968.8" cy="577.0" rx="225.3" ry="223.7" fill="url(#b9)"/>
<ellipse cx="970.3" cy="576.3" rx="223.0" ry="221.4" fill="url(#b10)"/>
<ellipse cx="971.6" cy="575.8" rx="220.4" ry="218.8" fill="url(#b11)"/>
<ellipse cx="972.3" cy="575.3" rx="217.5" ry="215.9" fill="url(#b12)"/>
<ellipse cx="972.6" cy="575.0" rx="214.3" ry="212.7" fill="url(#b13)"/>
<ellipse cx="972.3" cy="574.9" rx="210.8" ry="209.2" fill="url(#b0)"/>
<ellipse cx="971.5" cy="574.9" rx="207.0" ry="205.5" fill="url(#b1)"/>
<ellipse cx="970.2" cy="575.0" rx="203.0" ry="201.5" fill="url(#b2)"/>
<ellipse cx="968.6" cy="575.3" rx="198.8" ry="197.4" fill="url(#b3)"/>
<ellipse cx="966.8" cy="575.6" rx="194.5" ry="193.1" fill="url(#b4)"/>
<ellipse cx="965.0" cy="575.9" rx="190.2" ry="188.9" fill="url(#b4)"/>
<ellipse cx="963.2" cy="576.3" rx="186.0" ry="184.8" fill="url(#b5)"/>
<ellipse cx="961.5" cy="576.6" rx="181.9" ry="180.7" fill="url(#b6)"/>
<ellipse cx="963.2" cy="575.9" rx="179.5" ry="178.3" fill="url(#b7)"/>
<ellipse cx="964.9" cy="575.2" rx="177.1" ry="175.9" fill="url(#b7)"/>
<ellipse cx="966.7" cy="574.5" rx="174.7" ry="173.5" fill="url(#b8)"/>
<ellipse cx="968.5" cy="573.8" rx="172.2" ry="171.0" fill="url(#b9)"/>
<ellipse cx="970.0" cy="573.1" rx="169.6" ry="168.4" fill="url(#b10)"/>
<ellipse cx="971.2" cy="572.6" rx="166.9" ry="165.7" fill="url(#b11)"/>
<ellipse cx="972.0" cy="572.2" rx="163.9" ry="162.7" fill="url(#b12)"/>
<ellipse cx="972.3" cy="571.9" rx="160.7" ry="159.5" fill="url(#b13)"/>
<ellipse cx="972.0" cy="571.8" rx="157.2" ry="156.0" fill="url(#b0)"/>
<ellipse cx="971.2" cy="571.9" rx="153.5" ry="152.4" fill="url(#b1)"/>
<ellipse cx="969.9" cy="572.1" rx="149.7" ry="148.6" fill="url(#b2)"/>
<ellipse cx="968.3" cy="572.5" rx="145.7" ry="144.7" fill="url(#b3)"/>
<ellipse cx="966.6" cy="572.9" rx="141.7" ry="140.7" fill="url(#b4)"/>
<ellipse cx="964.7" cy="573.3" rx="137.7" ry="136.8" fill="url(#b4)"/>
<ellipse cx="962.9" cy="573.7" rx="133.8" ry="132.9" fill="url(#b5)"/>
<ellipse cx="961.3" cy="574.1" rx="129.9" ry="129.0" fill="url(#b6)"/>
<ellipse cx="962.9" cy="573.4" rx="127.2" ry="126.4" fill="url(#b7)"/>
<ellipse cx="964.7" cy="572.8" rx="124.6" ry="123.7" fill="url(#b7)"/>
<ellipse cx="966.5" cy="572.1" rx="121.9" ry="121.1" fill="url(#b8)"/>
<ellipse cx="968.2" cy="571.4" rx="119.2" ry="118.3" fill="url(#b9)"/>
<ellipse cx="969.8" cy="570.8" rx="116.4" ry="115.5" fill="url(#b10)"/>
<ellipse cx="971.0" cy="570.3" rx="113.4" ry="112.6" fill="url(#b11)"/>
<ellipse cx="971.8" cy="569.9" rx="110.3" ry="109.5" fill="url(#b12)"/>
<ellipse cx="972.1" cy="569.7" rx="107.1" ry="106.3" fill="url(#b13)"/>
<ellipse cx="971.8" cy="569.7" rx="103.6" ry="102.9" fill="url(#b0)"/>
<ellipse cx="971.0" cy="569.8" rx="100.1" ry="99.4" fill="url(#b1)"/>
<ellipse cx="969.7" cy="570.1" rx="96.4" ry="95.7" fill="url(#b2)"/>
<ellipse cx="968.2" cy="570.5" rx="92.7" ry="92.0" fill="url(#b3)"/>
<ellipse cx="966.4" cy="571.0" rx="89.0" ry="88.3" fill="url(#b4)"/>
<ellipse cx="964.6" cy="571.5" rx="85.2" ry="84.6" fill="url(#b4)"/>
<ellipse cx="962.8" cy="572.0" rx="81.6" ry="81.0" fill="url(#b5)"/>
<ellipse cx="961.2" cy="572.4" rx="77.9" ry="77.4" fill="url(#b6)"/>
<ellipse cx="962.8" cy="571.8" rx="75.0" ry="74.5" fill="url(#b7)"/>
<ellipse cx="964.5" cy="571.2" rx="72.1" ry="71.6" fill="url(#b7)"/>
<ellipse cx="966.4" cy="570.5" rx="69.2" ry="68.7" fill="url(#b8)"/>
<ellipse cx="968.1" cy="569.9" rx="66.2" ry="65.7" fill="url(#b9)"/>
<ellipse cx="969.7" cy="569.3" rx="63.2" ry="62.7" fill="url(#b10)"/>
<ellipse cx="970.9" cy="568.8" rx="60.0" ry="59.6" fill="url(#b11)"/>
<ellipse cx="971.7" cy="568.5" rx="56.8" ry="56.4" fill="url(#b12)"/>
<ellipse cx="972.0" cy="568.4" rx="53.5" ry="53.1" fill="url(#b13)"/>
<ellipse cx="971.7" cy="568.4" rx="50.1" ry="49.8" fill="url(#b0)"/>
<ellipse cx="970.9" cy="568.6" rx="46.7" ry="46.4" fill="url(#b1)"/>
<ellipse cx="969.6" cy="569.0" rx="43.2" ry="42.9" fill="url(#b2)"/>
<ellipse cx="968.1" cy="569.4" rx="39.7" ry="39.4" fill="url(#b3)"/>
<ellipse cx="966.3" cy="570.0" rx="36.2" ry="36.0" fill="url(#b4)"/>
<ellipse cx="964.5" cy="570.5" rx="32.8" ry="32.5" fill="url(#b4)"/>
<ellipse cx="962.7" cy="571.1" rx="29.4" ry="29.2" fill="url(#b5)"/>
<ellipse cx="961.1" cy="571.6" rx="26.0" ry="25.8" fill="url(#b6)"/>
<ellipse cx="962.7" cy="571.0" rx="22.8" ry="22.7" fill="url(#b7)"/>
<ellipse cx="964.5" cy="570.4" rx="19.7" ry="19.5" fill="url(#b7)"/>
<ellipse cx="966.3" cy="569.8" rx="16.5" ry="16.4" fill="url(#b8)"/>
<ellipse cx="968.1" cy="569.2" rx="13.2" ry="13.1" fill="url(#b9)"/>
<ellipse cx="969.6" cy="568.7" rx="10.0" ry="9.9" fill="url(#b10)"/>
<ellipse cx="970.9" cy="568.3" rx="6.7" ry="6.6" fill="url(#b11)"/>
<ellipse cx="971.7" cy="568.0" rx="3.3" ry="3.3" fill="url(#b12)"/>
</g>
<g stroke="#222222" stroke-width="1.3"><line x1="570.5" y1="454.0" x2="590.5" y2="466.0"/><line x1="604.5" y1="475.0" x2="624.5" y2="487.0"/><line x1="613.5" y1="444.5" x2="601.5" y2="463.5"/><line x1="594.5" y1="475.5" x2="586.5" y2="488.5"/></g>
<circle cx="597.5" cy="470.5" r="16" fill="none" stroke="#f4f4f4" stroke-width="1.3" stroke-opacity="0.85"/>
<circle cx="597.5" cy="470.5" r="16" fill="none" stroke="#d9656a" stroke-width="1.3" stroke-dasharray="6.28 6.28"/>
<circle cx="819.5" cy="604.5" r="4.2" fill="#f5a13a" stroke="#3a2508" stroke-width="1.3"/>
<rect x="-10.0" y="-8.0" width="64.0" height="35.5" rx="5" fill="rgba(38,38,38,0.78)"/>
<text x="30.5" y="18.6" fill="#d9d9d9" font-size="17" text-anchor="end" >Object Mode</text>
<path d="M39.3 13.4l4.2 4.2l4.2 -4.2" fill="none" stroke="#e0e0e0" stroke-width="1.8" stroke-linecap="round" stroke-linejoin="round"/>
<rect x="65.6" y="-8.0" width="61.4" height="35.5" rx="5" fill="rgba(38,38,38,0.78)"/>
<text x="96.3" y="18.6" fill="#d9d9d9" font-size="17" text-anchor="middle" >View</text>
<rect x="131.0" y="-8.0" width="74.0" height="35.5" rx="5" fill="rgba(38,38,38,0.78)"/>
<text x="168.0" y="18.6" fill="#d9d9d9" font-size="17" text-anchor="middle" >Select</text>
<rect x="208.0" y="-8.0" width="53.5" height="35.5" rx="5" fill="rgba(38,38,38,0.78)"/>
<text x="234.8" y="18.6" fill="#d9d9d9" font-size="17" text-anchor="middle" >Add</text>
<rect x="265.6" y="-8.0" width="75.0" height="35.5" rx="5" fill="rgba(38,38,38,0.78)"/>
<text x="303.1" y="18.6" fill="#d9d9d9" font-size="17" text-anchor="middle" >Object</text>
<text x="118.5" y="67.4" fill="#ececec" font-size="17" text-anchor="end" >User Perspective</text>
<text x="191.0" y="96.5" fill="#ececec" font-size="17" text-anchor="end" >(56) Collection | Grid.001</text>
<rect x="916.0" y="-8.0" width="48.0" height="35.5" rx="5" fill="rgba(38,38,38,0.78)"/>
<g transform="translate(919,1)"><path d="M2.5 9.5q8-9.5 16.5 0q-8.5 8-16.5 0z" fill="#e6e6e6"/><circle cx="10.8" cy="8.8" r="3.4" fill="#2a2a2a"/><circle cx="10.8" cy="8.8" r="1.5" fill="#e6e6e6"/><path d="M3 12l11 5.5l-5.2 1.3l-2.8 5z" fill="#e6e6e6" stroke="#2a2a2a" stroke-width="0.8"/></g>
<path d="M950.8 13.9l4.2 4.2l4.2 -4.2" fill="none" stroke="#e0e0e0" stroke-width="1.8" stroke-linecap="round" stroke-linejoin="round"/>
<path d="M981 -8h24v35.5h-24a5 5 0 0 1-5-5v-25.500z" fill="#5179bb"/>
<path d="M1006 -8h25a5 5 0 0 1 5 5v25.5a5 5 0 0 1-5 5h-25z" fill="rgba(38,38,38,0.78)"/>
<g transform="translate(978,0)" fill="none" stroke="#f0f0f0" stroke-width="1.7" stroke-linecap="round"><circle cx="5" cy="21" r="2.3"/><path d="M7 19L21.500 4.500M15 4h7v7"/><path d="M3.500 8.500q11 0.500 16.500 15"/></g>
<path d="M1016.8 13.9l4.2 4.2l4.2 -4.2" fill="none" stroke="#e0e0e0" stroke-width="1.8" stroke-linecap="round" stroke-linejoin="round"/>
<path d="M1053 -8h24.500v35.5h-24.500a5 5 0 0 1-5-5v-25.500z" fill="#5179bb"/>
<path d="M1078.500 -8h25.500a5 5 0 0 1 5 5v25.5a5 5 0 0 1-5 5h-25.500z" fill="rgba(38,38,38,0.78)"/>
<g transform="translate(1050,0)"><circle cx="10" cy="16.500" r="7" fill="none" stroke="#f0f0f0" stroke-width="1.8"/><circle cx="16.500" cy="9.500" r="7.300" fill="#f0f0f0" stroke="#5179bb" stroke-width="1.2"/></g>
<path d="M1089.3 13.9l4.2 4.2l4.2 -4.2" fill="none" stroke="#e0e0e0" stroke-width="1.8" stroke-linecap="round" stroke-linejoin="round"/>
<rect x="1121.0" y="-8.0" width="27.6" height="35.5" rx="5" fill="rgba(80,80,80,0.85)"/>
<g transform="translate(1124,2)" fill="none" stroke="#e0e0e0" stroke-width="1.6"><path d="M6.500 5.500v-3.500h14v14h-3.500"/><rect x="1.500" y="6.500" width="14.500" height="14.500"/><path d="M7 10v6.500h2M12 16.500h2" stroke-width="1.4"/></g>
<path d="M1165.600 -8h25v35.5h-25a5 5 0 0 1-5-5v-25.500z" fill="rgba(80,80,80,0.88)"/>
<rect x="1191" y="-8" width="29.500" height="35.500" fill="#5179bb"/>
<rect x="1221.700" y="-8" width="29.300" height="35.500" fill="rgba(80,80,80,0.88)"/>
<rect x="1252.200" y="-8" width="29.600" height="35.500" fill="rgba(80,80,80,0.88)"/>
<path d="M1283 -8h25a5 5 0 0 1 5 5v25.5a5 5 0 0 1-5 5h-25z" fill="rgba(38,38,38,0.78)"/>
<g fill="none" stroke="#d8d8d8" stroke-width="1.5"><circle cx="1175.500" cy="13.500" r="10"/><ellipse cx="1175.500" cy="13.500" rx="4.500" ry="10"/><path d="M1165.500 13.500h20"/></g>
<circle cx="1206" cy="13.500" r="10.500" fill="#ffffff"/>
<g><circle cx="1236.500" cy="13.500" r="10" fill="none" stroke="#d8d8d8" stroke-width="1.5"/><path d="M1236.500 3.500a10 10 0 0 0-10 10h10z" fill="#d8d8d8"/><path d="M1236.500 13.500h10a10 10 0 0 1-10 10z" fill="#9a9a9a"/><path d="M1226.500 13.500a10 10 0 0 0 10 10v-10z" fill="#d8d8d8" fill-opacity="0.9"/></g>
<g><circle cx="1267" cy="13.500" r="10" fill="none" stroke="#d8d8d8" stroke-width="1.5"/><circle cx="1265.500" cy="12" r="6.500" fill="none" stroke="#d8d8d8" stroke-width="1.3"/><path d="M1262 8.500q2-2.500 5-2" stroke="#d8d8d8" stroke-width="1.6" fill="none" stroke-linecap="round"/></g>
<path d="M1293.8 13.9l4.2 4.2l4.2 -4.2" fill="none" stroke="#e0e0e0" stroke-width="1.8" stroke-linecap="round" stroke-linejoin="round"/>
<path d="M1328 57h-6.500a5 5 0 0 0-5 5v13a5 5 0 0 0 5 5h6.500z" fill="rgba(40,40,40,0.8)"/>
<path d="M1325.500 62.500l-5.500 6l5.500 6" fill="none" stroke="#d0d0d0" stroke-width="1.6" stroke-linecap="round" stroke-linejoin="round"/>
<line x1="1247.6" y1="115.5" x2="1275.200" y2="71.200" stroke="#ad4558" stroke-width="3.2"/>
<line x1="1247.6" y1="115.5" x2="1203.300" y2="88.200" stroke="#6b941f" stroke-width="3.2"/>
<circle cx="1248.600" cy="124.200" r="9.200" fill="#3a75c4"/>
<circle cx="1292.500" cy="142" r="9.800" fill="#8fdb0d"/>
<circle cx="1220.500" cy="158.800" r="9.800" fill="#ff3653"/>
<circle cx="1275.200" cy="71.200" r="12" fill="#a83a4c"/>
<circle cx="1203.300" cy="88.200" r="12" fill="#678f1c"/>
<circle cx="1247.600" cy="106.700" r="12" fill="#3d96fb"/>
<text x="1275.2" y="77.2" fill="#3a0a12" font-size="16.5" text-anchor="middle" >X</text>
<text x="1203.3" y="94.2" fill="#1c2b04" font-size="16.5" text-anchor="middle" >Y</text>
<text x="1247.6" y="112.7" fill="#0a2450" font-size="16.5" text-anchor="middle" >Z</text>
<circle cx="1290.8" cy="202.5" r="21.700" fill="rgba(30,30,30,0.47)"/>
<circle cx="1290.8" cy="251.7" r="21.700" fill="rgba(30,30,30,0.47)"/>
<circle cx="1290.8" cy="301.7" r="21.700" fill="rgba(30,30,30,0.47)"/>
<circle cx="1290.8" cy="351.7" r="21.700" fill="rgba(30,30,30,0.47)"/>
<g><circle cx="1293.300" cy="201.200" r="9.500" fill="#e2e2e2"/><path d="M1287 208l-8 7.500" stroke="#e2e2e2" stroke-width="3.600" stroke-linecap="round"/><path d="M1288.300 201.200h10M1293.300 196.200v10" stroke="#2a2a2a" stroke-width="1.8"/></g>
<g transform="translate(1290.800,251.700)" fill="#e2e2e2" stroke="#e2e2e2" stroke-linecap="round"><path d="M-6 2l-2.300-10" stroke-width="3.100"/><path d="M-2 1l-0.800-13.500" stroke-width="3.100"/><path d="M2.200 1l0.800-13.300" stroke-width="3.100"/><path d="M6 2.500l2.400-10.500" stroke-width="3.100"/><path d="M-7.800 1q-0.500 11.500 7.800 11.500q7.800 0 7.800-9l0-2.500z" stroke-width="1"/><path d="M-6.500 8.500l-7-7.500" stroke-width="3.400"/></g>
<g transform="translate(1290.800,301.700)" fill="#e2e2e2"><circle cx="-7.500" cy="-5" r="5.300"/><circle cx="3.500" cy="-7" r="6"/><circle cx="-7.500" cy="-5" r="1.700" fill="#333"/><circle cx="3.500" cy="-7" r="1.900" fill="#333"/><rect x="-9" y="1.500" width="15" height="10.500" rx="1.500"/><path d="M6.500 7l7-4.500v9z"/><rect x="-13" y="4" width="4" height="3.500"/></g>
<g transform="translate(1290.800,351.700)" fill="none" stroke="#e2e2e2" stroke-width="1.9"><path d="M-6.500 -10h13l6 21h-25z"/><path d="M-2.200 -10l-2 21M2.200 -10l2 21M-8.300 -3.500h16.600M-10.300 3.500h20.600"/></g></svg>
<div style="position:absolute;left:-10px;top:1006px;width:1337.5px;height:74px;background:#2b2b2b;border-radius:0 7px 0 0;overflow:hidden"><div style="position:absolute;left:0;top:0;width:100%;height:40.3px;background:#3a3a3a"></div></div>
<svg width="1328" height="74" viewBox="0 1006 1328 74" style="position:absolute;left:0;top:1006px" font-family="DejaVu Sans, Liberation Sans, sans-serif">
<rect x="-10" y="1012.500" width="63" height="27.500" rx="4" fill="#2e2e2e" stroke="#454545" stroke-width="1"/>
<rect x="54.500" y="1012.500" width="95.500" height="27.500" rx="4" fill="#2e2e2e" stroke="#454545" stroke-width="1"/>
<text x="27.0" y="1032.0" fill="#d9d9d9" font-size="17" text-anchor="end" >Playback</text>
<path d="M39.3 1025.9l4.2 4.2l4.2 -4.2" fill="none" stroke="#e0e0e0" stroke-width="1.8" stroke-linecap="round" stroke-linejoin="round"/>
<text x="65.5" y="1032.0" fill="#d9d9d9" font-size="17" text-anchor="start" >Keying</text>
<path d="M136.3 1025.9l4.2 4.2l4.2 -4.2" fill="none" stroke="#e0e0e0" stroke-width="1.8" stroke-linecap="round" stroke-linejoin="round"/>
<text x="164.0" y="1032.0" fill="#d9d9d9" font-size="17" text-anchor="start" >View</text>
<text x="229.0" y="1032.0" fill="#d9d9d9" font-size="17" text-anchor="start" >Marker</text>
<rect x="463.700" y="1012.500" width="29.200" height="27.500" rx="4.500" fill="#565656"/>
<circle cx="478.300" cy="1026.300" r="5.600" fill="#e6e6e6"/>
<rect x="503.800" y="1012.500" width="189.600" height="27.500" rx="4.500" fill="#565656"/>
<rect x="535.0" y="1012.500" width="1" height="27.500" fill="#3a3a3a"/>
<rect x="566.7" y="1012.500" width="1" height="27.500" fill="#3a3a3a"/>
<rect x="598.3" y="1012.500" width="1" height="27.500" fill="#3a3a3a"/>
<rect x="629.9" y="1012.500" width="1" height="27.500" fill="#3a3a3a"/>
<rect x="661.5" y="1012.500" width="1" height="27.500" fill="#3a3a3a"/>
<g fill="#e8e8e8"><rect x="512.1" y="1019.3" width="2.800" height="14"/><path d="M527.1 1019.3v14l-10-7z"/></g>
<g fill="#e8e8e8"><path d="M539.9 1026.3l5.500 -6.500l5.500 6.500l-5.500 6.500z"/><path d="M561.9 1020.8v11l-7-5.500z"/></g>
<path d="M588.0 1018.8v15l-11.500-7.500z" fill="#e8e8e8"/>
<path d="M609.6 1018.8v15l11.500-7.500z" fill="#e8e8e8"/>
<g fill="#e8e8e8"><path d="M646.7 1026.3l5.500 -6.500l5.500 6.500l-5.500 6.500z"/><path d="M635.7 1020.8v11l7-5.500z"/></g>
<g fill="#e8e8e8"><rect x="682.4" y="1019.3" width="2.800" height="14"/><path d="M670.2 1019.3v14l10-7z"/></g>
<rect x="855" y="1012.500" width="118.400" height="28" rx="4.500" fill="#565656"/>
<text x="914.2" y="1032.0" fill="#e6e6e6" font-size="17" text-anchor="middle" >56</text>
<rect x="984.400" y="1012.500" width="311.600" height="28" rx="4.500" fill="#565656"/>
<rect x="1014.400" y="1012.500" width="1" height="28" fill="#3a3a3a"/><rect x="1159" y="1012.500" width="1" height="28" fill="#3a3a3a"/>
<g fill="none" stroke="#e0e0e0" stroke-width="1.7" stroke-linecap="round"><circle cx="999.300" cy="1028" r="8.300"/><path d="M999.300 1023v5.300h4.200M996 1017h6.600M999.300 1017v2.500M1006 1020.500l2-2"/></g>
<text x="1040.0" y="1032.0" fill="#e0e0e0" font-size="17" text-anchor="start" >Start</text>
<text x="1137.5" y="1032.0" fill="#e0e0e0" font-size="17" text-anchor="end" >1</text>
<text x="1185.0" y="1032.0" fill="#e0e0e0" font-size="17" text-anchor="start" >End</text>
<text x="1275.5" y="1032.0" fill="#e0e0e0" font-size="17" text-anchor="end" >250</text>
<text x="21.5" y="1070.8" fill="#b4b4b4" font-size="17" text-anchor="middle" >20</text>
<text x="130.3" y="1070.8" fill="#b4b4b4" font-size="17" text-anchor="middle" >40</text>
<text x="348.1" y="1070.8" fill="#b4b4b4" font-size="17" text-anchor="middle" >80</text>
<text x="456.9" y="1070.8" fill="#b4b4b4" font-size="17" text-anchor="middle" >100</text>
<text x="565.8" y="1070.8" fill="#b4b4b4" font-size="17" text-anchor="middle" >120</text>
<text x="674.6" y="1070.8" fill="#b4b4b4" font-size="17" text-anchor="middle" >140</text>
<text x="783.4" y="1070.8" fill="#b4b4b4" font-size="17" text-anchor="middle" >160</text>
<text x="892.3" y="1070.8" fill="#b4b4b4" font-size="17" text-anchor="middle" >180</text>
<text x="1001.1" y="1070.8" fill="#b4b4b4" font-size="17" text-anchor="middle" >200</text>
<text x="1110.0" y="1070.8" fill="#b4b4b4" font-size="17" text-anchor="middle" >220</text>
<text x="1218.8" y="1070.8" fill="#b4b4b4" font-size="17" text-anchor="middle" >240</text>
<text x="239.5" y="1070.8" fill="#b4b4b4" font-size="17" text-anchor="start" >0</text>
<rect x="200.500" y="1052" width="37.300" height="21" rx="4.500" fill="#4f7ac0"/>
<text x="219.2" y="1070.8" fill="#ffffff" font-size="17" text-anchor="middle" >56</text>
<rect x="-10" y="1070.900" width="1331" height="12" rx="5" fill="#626262"/>
<circle cx="1307.500" cy="1078.500" r="5.300" fill="#3c3c3c"/>
<path d="M1319 1080l7-7" stroke="#8a8a8a" stroke-width="1.500"/>
</svg>
<div style="position:absolute;left:1333px;top:-8px;width:600px;height:320px;background:#2a2a2a;border-radius:0 0 0 7px;overflow:hidden">
<div style="position:absolute;left:0;top:34.4px;width:100%;height:32.200px;background:#2e2e2e"></div>
<div style="position:absolute;left:0;top:98.6px;width:100%;height:32.200px;background:#2e2e2e"></div>
<div style="position:absolute;left:0;top:163.0px;width:100%;height:32.200px;background:#2e2e2e"></div>
<div style="position:absolute;left:0;top:227.4px;width:100%;height:32.200px;background:#2e2e2e"></div>
<div style="position:absolute;left:0;top:291.8px;width:100%;height:32.200px;background:#2e2e2e"></div>
</div>
<svg width="587" height="312" viewBox="1333 0 587 312" style="position:absolute;left:1333px;top:0" font-family="DejaVu Sans, Liberation Sans, sans-serif">
<g transform="translate(1369.2,-1.5) scale(1.000)" fill="none" stroke="#e6e6e6" stroke-width="1.9"><rect x="1" y="1.500" width="20" height="5"/><path d="M2.500 6.500v13.500h17v-13.500"/><rect x="8.500" y="10" width="5" height="2.600" fill="#e6e6e6" stroke="none"/></g>
<text x="1403.0" y="17.7" fill="#e2e2e2" font-size="17" text-anchor="start" >Scene Collection</text>
<path d="M1374.900 39h9l-4.500 8.600z" fill="#c4c4c4"/>
<rect x="1404.200" y="33.800" width="17" height="16.500" rx="2" fill="#f2f2f2"/>
<path d="M1407.500 41.500l4 4.300l6.800-8.500" fill="none" stroke="#1f1f1f" stroke-width="2.500" stroke-linecap="round" stroke-linejoin="round"/>
<rect x="1429" y="27.900" width="31.500" height="27.600" rx="6" fill="#3d3d3d" stroke="#5c5c5c" stroke-width="1.2"/>
<g transform="translate(1433.8,31.2) scale(1.000)" fill="none" stroke="#e6e6e6" stroke-width="1.9"><rect x="1" y="1.500" width="20" height="5"/><path d="M2.500 6.500v13.500h17v-13.500"/><rect x="8.500" y="10" width="5" height="2.600" fill="#e6e6e6" stroke="none"/></g>
<text x="1467.5" y="49.7" fill="#e2e2e2" font-size="17" text-anchor="start" >Collection</text>
<g stroke="#8a8a8a" stroke-width="1.2"><path d="M1411.800 50v121.500M1411.800 74.800h27M1411.800 106.800h24M1411.800 139h20M1411.800 171.500h27" fill="none"/></g>
<path d="M1408 70.5v8.600l8.300-4.300z" fill="#b0b0b0"/>
<path d="M1408 102.5v8.600l8.300-4.300z" fill="#b0b0b0"/>
<path d="M1408 134.7v8.600l8.300-4.300z" fill="#b0b0b0"/>
<path d="M1408 167.2v8.600l8.300-4.300z" fill="#b0b0b0"/>
<g transform="translate(1432.0,60.6)" fill="#a0673a"><circle cx="5.500" cy="7.500" r="5.300"/><circle cx="16" cy="5.500" r="6.200"/><circle cx="5.500" cy="7.500" r="1.600" fill="#2a2a2a"/><circle cx="16" cy="5.500" r="1.800" fill="#2a2a2a"/><rect x="3.500" y="13" width="15" height="11" rx="1.500"/><path d="M18.500 18.500l6-4v9z"/><rect x="0.500" y="15.500" width="3.500" height="3.500"/></g>
<text x="1467.5" y="81.9" fill="#8e8e8e" font-size="17" text-anchor="start" >Camera</text>
<rect x="1567.300" y="59.700" width="31.400" height="28" rx="6" fill="#5a5a5a" stroke="#6a6a6a" stroke-width="1"/>
<g transform="translate(1571.500,62.500)" fill="none" stroke="#3f9c7d" stroke-width="1.700"><circle cx="6.500" cy="6.500" r="4.300"/><circle cx="15.500" cy="5.500" r="5"/><rect x="4" y="12.500" width="14" height="8.500" rx="1"/><path d="M18 16.500l5-3v7zM1 15h3" /></g>
<g transform="translate(1433.5,95.0)"><path d="M1.500 2.500h20l-10 19.500z" fill="none" stroke="#e8994d" stroke-width="4.200" stroke-linejoin="round"/></g>
<text x="1467.5" y="113.6" fill="#e2e2e2" font-size="17" text-anchor="start" >Grid</text>
<g transform="translate(1540.2,95.5) scale(1.00)" fill="none" stroke="#6b8fd6" stroke-width="2.1" stroke-linejoin="round" stroke-linecap="round"><path d="M15.500 1.500a6.200 6.200 0 0 0-5 8.800l-8.300 8.300a2.400 2.400 0 0 0 3.400 3.400l8.300-8.300a6.200 6.200 0 0 0 8.300-6.200l-3.700 3.500l-3.800-1.300l-1.200-3.800z"/></g>
<g transform="translate(1572.8,95.3) scale(1.00)" fill="none" stroke="#22c08d" stroke-width="1.9"><path d="M5 3.500h12.500M4.500 6l5.500 11M18 6l-5.500 11"/><rect x="1" y="1" width="4.500" height="4.500"/><rect x="17" y="1" width="4.500" height="4.500"/><rect x="9" y="16.500" width="4.500" height="4.500"/></g>
<rect x="1429" y="124.100" width="31.500" height="28" rx="6" fill="#585858" stroke="#6a6a6a" stroke-width="1"/>
<g transform="translate(1433.5,127.3)"><path d="M1.500 2.500h20l-10 19.500z" fill="none" stroke="#e8994d" stroke-width="4.200" stroke-linejoin="round"/></g>
<text x="1467.5" y="146.0" fill="#e2e2e2" font-size="17" text-anchor="start" >Grid.001</text>
<g transform="translate(1579.8,127.5) scale(1.00)" fill="none" stroke="#6b8fd6" stroke-width="2.1" stroke-linejoin="round" stroke-linecap="round"><path d="M15.500 1.500a6.200 6.200 0 0 0-5 8.800l-8.300 8.300a2.400 2.400 0 0 0 3.400 3.400l8.300-8.300a6.200 6.200 0 0 0 8.300-6.200l-3.700 3.500l-3.800-1.300l-1.200-3.800z"/></g>
<g transform="translate(1612.2,127.3) scale(1.00)" fill="none" stroke="#22c08d" stroke-width="1.9"><path d="M5 3.500h12.500M4.500 6l5.500 11M18 6l-5.500 11"/><rect x="1" y="1" width="4.500" height="4.500"/><rect x="17" y="1" width="4.500" height="4.500"/><rect x="9" y="16.500" width="4.500" height="4.500"/></g>
<g transform="translate(1435.0,158.8)" fill="#9a6236"><path d="M10 0a9.500 9.500 0 0 1 5.500 17.200v2.300h-11v-2.300a9.500 9.500 0 0 1 5.500-17.200z"/><rect x="5" y="20.500" width="10" height="1.800"/><path d="M6.500 23.300h7l-3.500 2z"/><path d="M5.500 10.500h3.200l1.300 2l1.300-2h3.200M8.700 10.500v5M11.300 10.500v5" fill="none" stroke="#2a2a2a" stroke-width="1.3"/></g>
<text x="1467.5" y="177.8" fill="#8e8e8e" font-size="17" text-anchor="start" >Light</text>
<g fill="none" stroke="#2f8a6c" stroke-width="1.500"><circle cx="1556.500" cy="169.500" r="10"/><circle cx="1556.500" cy="169.500" r="1.500" fill="#2f8a6c"/><path d="M1556.500 172v4M1556.500 178.500v4"/></g>
<g transform="translate(1896.0,41.3)"><path d="M-10.700 0q10.700-12.800 21.400 0q-10.700 12.800-21.400 0z" fill="#e6e6e6"/><circle r="5" fill="#2a2a2a"/><circle r="2.400" fill="#e6e6e6"/></g>
<g transform="translate(1896.0,105.5)"><path d="M-10.700 0q10.700-12.800 21.400 0q-10.700 12.800-21.400 0z" fill="#e6e6e6"/><circle r="5" fill="#2a2a2a"/><circle r="2.400" fill="#e6e6e6"/></g>
<g transform="translate(1896.0,138.0)"><path d="M-10.700 0q10.700-12.800 21.400 0q-10.700 12.800-21.400 0z" fill="#e6e6e6"/><circle r="5" fill="#2a2a2a"/><circle r="2.400" fill="#e6e6e6"/></g>
<path d="M1885.5 71.5q10.500 14.500 21 0" fill="none" stroke="#c8c8c8" stroke-width="1.6" stroke-linecap="round"/>
<path d="M1885.5 168.0q10.500 14.500 21 0" fill="none" stroke="#c8c8c8" stroke-width="1.6" stroke-linecap="round"/>
</svg>
<div style="position:absolute;left:1333px;top:317.500px;width:600px;height:780px;background:#212121;border-radius:7px 0 0 0;overflow:hidden"><div style="position:absolute;left:0;top:0;width:100%;height:41.200px;background:#3b3b3b"></div><div style="position:absolute;left:45px;top:41.200px;width:560px;height:760px;background:#434343"></div></div>
<div style="position:absolute;left:1386.300px;top:423px;width:530.500px;height:606.500px;background:#393939;border-radius:5px;overflow:hidden"><div style="position:absolute;left:0;top:0;width:100%;height:38.700px;background:#3d3d3d;border-bottom:1px solid #343434"></div><div style="position:absolute;left:0;top:402.300px;width:100%;height:130.300px;background:#313131"></div></div>
<svg width="587" height="763" viewBox="1333 317 587 763" style="position:absolute;left:1333px;top:317px" font-family="DejaVu Sans, Liberation Sans, sans-serif">
<rect x="1346.800" y="322.600" width="48.200" height="29.200" rx="4.500" fill="#2a2a2a" stroke="#454545" stroke-width="0.8"/>
<g fill="none" stroke="#e6e6e6" stroke-width="1.500"><rect x="1353.500" y="327.300" width="21" height="8.200" rx="4.100"/><rect x="1353.500" y="340.500" width="21" height="8.200" rx="4.100"/></g><g fill="#e6e6e6"><path d="M1357.600 326.600h8.500v9.600h-8.500a4.800 4.800 0 0 1 0-9.600z"/><path d="M1357.600 339.800h8.500v9.600h-8.500a4.800 4.800 0 0 1 0-9.600z"/></g>
<path d="M1381.2 337.5l4.6 4.6l4.6 -4.6" fill="none" stroke="#e0e0e0" stroke-width="1.8" stroke-linecap="round" stroke-linejoin="round"/>
<g><rect x="1423.800" y="331.500" width="12.800" height="12.800" fill="#f0f0f0"/><path d="M1419.300 332.500v-5.300h5.300M1436.300 327.200h5.300v5.300M1441.600 343.500v5.300h-5.300M1424.600 348.800h-5.300v-5.300" fill="none" stroke="#e0e0e0" stroke-width="1.500"/></g>
<text x="1456.0" y="343.3" fill="#e6e6e6" font-size="17" text-anchor="start" >Grid.001</text>
<g transform="translate(1896,338) rotate(45)" fill="none" stroke="#a8a8a8" stroke-width="1.500" stroke-linejoin="round"><path d="M-3.500 -12h7v2.500l-1.500 1v6l3.500 3v1.500h-10v-1.500l3.500-3v-6l-1.500-1z"/><path d="M0 2v10"/></g>
<path d="M1378 372.7h-37.500a5 5 0 0 0-5 5v32.500a5 5 0 0 0 5 5h37.500z" fill="#2b2b2b"/>
<g transform="translate(1357.0,393.9)" fill="#dcdcdc" stroke="#dcdcdc"><path d="M-7 -12.500v11" stroke-width="2.200" fill="none"/><path d="M-9.800 0.500h5.600" stroke-width="1.600" fill="none"/><circle cx="-7" cy="5.200" r="4.100" stroke="none"/><path d="M7.300 -2v10.500" stroke-width="3.800" stroke-linecap="round" fill="none"/><path d="M3.300 -11.800v4.300a4 4 0 0 0 8 0v-4.300" stroke-width="3" fill="none"/><circle cx="7.300" cy="8.300" r="0.900" fill="#2b2b2b" stroke="none"/></g>
<path d="M1378 430.7h-37.500a5 5 0 0 0-5 5v32.500a5 5 0 0 0 5 5h37.500z" fill="#2b2b2b"/>
<g transform="translate(1357.0,451.9)" fill="#dcdcdc"><path d="M-11.500 -6.500h5l1.500-3h9l1.500 3h6v17.500h-23z"/><rect x="-8.500" y="-2.500" width="12" height="2" fill="#2b2b2b"/><rect x="-8.500" y="2" width="12" height="2" fill="#2b2b2b"/><rect x="-8.500" y="6.300" width="12" height="2" fill="#2b2b2b"/><rect x="6" y="-2.500" width="3" height="3" fill="#2b2b2b"/><rect x="6" y="3.500" width="3" height="3" fill="#2b2b2b"/><rect x="7" y="-11" width="4" height="2"/></g>
<path d="M1378 476.0h-37.500a5 5 0 0 0-5 5v32.500a5 5 0 0 0 5 5h37.500z" fill="#2b2b2b"/>
<g transform="translate(1357.0,497.2)" fill="#dcdcdc"><path d="M-12 -10.500h24a0 0 0 0 1 0 0v11h-5v-3.500h-14v3.500h-5z"/><rect x="-6" y="-1" width="12.500" height="12" fill="none" stroke="#dcdcdc" stroke-width="1.800"/><path d="M-5 9.500l4-5l2.500 2.500l2-2l2.500 4.500z"/></g>
<path d="M1378 521.2h-37.500a5 5 0 0 0-5 5v32.500a5 5 0 0 0 5 5h37.500z" fill="#2b2b2b"/>
<g transform="translate(1357.0,542.4)" fill="none" stroke="#dcdcdc" stroke-width="1.800"><rect x="-4" y="-11" width="15.500" height="15.500" fill="#dcdcdc"/><path d="M-2.500 2.500l4.500-7l3.500 4l2-2l3 5z" fill="#2b2b2b" stroke="none"/><path d="M-7.500 -7v15h15M-11 -3.500v15h15"/></g>
<path d="M1378 566.4h-37.500a5 5 0 0 0-5 5v32.500a5 5 0 0 0 5 5h37.500z" fill="#2b2b2b"/>
<g transform="translate(1357.0,587.6)" fill="#dcdcdc"><path d="M-5.500 -11l6 13.500a6 6 0 0 1-12 0z"/><circle cx="7.500" cy="-8" r="3"/><circle cx="4.500" cy="5.500" r="6" fill="#2b2b2b" stroke="#dcdcdc" stroke-width="1.800"/><circle cx="4.500" cy="5.500" r="2.300" fill="#2b2b2b" stroke="#dcdcdc" stroke-width="1.300"/></g>
<path d="M1378 611.6h-37.500a5 5 0 0 0-5 5v32.500a5 5 0 0 0 5 5h37.500z" fill="#2b2b2b"/>
<g transform="translate(1357.0,632.8)"><circle r="10" fill="none" stroke="#d9596a" stroke-width="2"/><path d="M-8 -3q3-6 8-5q1 3-2 4.500q-1 3 2 4q3 2 0 6q-5 1-8-3.500zM4 -6q4 0 5 4q-2 3-5 0z" fill="#d9596a"/><path d="M-12 10l24-20" stroke="#d9596a" stroke-width="1.600"/></g>
<path d="M1378 668.6h-37.500a5 5 0 0 0-5 5v32.500a5 5 0 0 0 5 5h37.500z" fill="#2b2b2b"/>
<g transform="translate(1357.0,689.8)"><rect x="-7" y="-7" width="14" height="14" fill="#e8994d"/><path d="M-11.500 -6.500v-5h5M6.500 -11.500h5v5M11.500 6.500v5h-5M-6.500 11.500h-5v-5" fill="none" stroke="#e8994d" stroke-width="1.600"/></g>
<path d="M1378 713.8h-37.500a5 5 0 0 0-5 5v32.500a5 5 0 0 0 5 5h37.500z" fill="#434343"/>
<g transform="translate(1357.0,735.0)"><path d="M4 -11a6.500 6.500 0 0 0-5 9l-9.500 9.500a2.600 2.600 0 0 0 3.700 3.700l9.500-9.500a6.500 6.500 0 0 0 9-6.500l-4 3.800l-4-1.400l-1.300-4z" fill="#6d9eef"/></g>
<path d="M1378 759.0h-37.500a5 5 0 0 0-5 5v32.500a5 5 0 0 0 5 5h37.500z" fill="#2b2b2b"/>
<g transform="translate(1357.0,780.2)" fill="#7d9fd8" stroke="#7d9fd8" stroke-width="1.600"><circle cx="-7.500" cy="-7.500" r="3.600"/><circle cx="8" cy="-8" r="2.200"/><circle cx="8.500" cy="8.500" r="2.800"/><circle cx="-7" cy="9.500" r="1.600"/><path d="M-7.500 -7.500h15.500M-7.500 -7.500l16 16M-7.500 -7.500l0.500 17" fill="none"/></g>
<path d="M1378 804.2h-37.500a5 5 0 0 0-5 5v32.500a5 5 0 0 0 5 5h37.500z" fill="#2b2b2b"/>
<g transform="translate(1357.0,825.4)" fill="none" stroke="#7d9fd8" stroke-width="1.900"><path d="M6.500 -7.500a10 10 0 1 0 3 12"/><circle cx="-1" cy="0" r="4" fill="#7d9fd8"/><circle cx="8.500" cy="-8.500" r="2.600" fill="#7d9fd8" stroke="none"/></g>
<path d="M1378 849.4h-37.500a5 5 0 0 0-5 5v32.500a5 5 0 0 0 5 5h37.500z" fill="#2b2b2b"/>
<g transform="translate(1357.0,870.6) rotate(-35)" fill="none" stroke="#7d9fd8" stroke-width="1.900"><path d="M-6 -8.500a8.500 8.500 0 0 0 0 17l15-4.500a4.300 4.300 0 0 0 0-8z"/><circle cx="-6" cy="0" r="3.600" fill="#7d9fd8"/><circle cx="8" cy="0" r="1.300" fill="#7d9fd8"/></g>
<path d="M1378 894.6h-37.500a5 5 0 0 0-5 5v32.500a5 5 0 0 0 5 5h37.500z" fill="#2b2b2b"/>
<g transform="translate(1345.5,904.8) scale(1.03)" fill="none" stroke="#22c08d" stroke-width="2.0"><path d="M5 3.500h12.500M4.500 6l5.500 11M18 6l-5.500 11"/><rect x="1" y="1" width="4.500" height="4.500"/><rect x="17" y="1" width="4.500" height="4.500"/><rect x="9" y="16.500" width="4.500" height="4.500"/></g>
<path d="M1378 939.8h-37.500a5 5 0 0 0-5 5v32.500a5 5 0 0 0 5 5h37.500z" fill="#2b2b2b"/>
<g transform="translate(1357.0,961.0)"><circle r="10.300" fill="none" stroke="#e0606e" stroke-width="1.800"/><path d="M0 0v-10.300a10.300 10.300 0 0 0-10.300 10.300zM0 0h10.300a10.300 10.300 0 0 1-4 8q-8 4.500-15-1q4 3 9.500-1z" fill="#e0606e"/></g>
<path d="M1378 997.6h-37.500a5 5 0 0 0-5 5v32.500a5 5 0 0 0 5 5h37.500z" fill="#2b2b2b"/>
<g transform="translate(1357.0,1018.8)"><rect x="-11" y="-11" width="22" height="22" fill="#d9677a"/><rect x="-9.2" y="-4.6" width="4.600" height="4.600" fill="#3a1a20"/><rect x="-9.2" y="4.6" width="4.600" height="4.600" fill="#3a1a20"/><rect x="-4.6" y="-9.2" width="4.600" height="4.600" fill="#3a1a20"/><rect x="-4.6" y="0.0" width="4.600" height="4.600" fill="#3a1a20"/><rect x="0.0" y="-4.6" width="4.600" height="4.600" fill="#3a1a20"/><rect x="0.0" y="4.6" width="4.600" height="4.600" fill="#3a1a20"/><rect x="4.6" y="-9.2" width="4.600" height="4.600" fill="#3a1a20"/><rect x="4.6" y="0.0" width="4.600" height="4.600" fill="#3a1a20"/></g>
<rect x="1392.4" y="373.0" width="518.6" height="29.0" rx="4.5" fill="#2b2b2b" stroke="#363636" stroke-width="1"/>
<text x="1403.4" y="393.5" fill="#e6e6e6" font-size="17" text-anchor="start" >Add Modifier</text>
<path d="M1896.5 387.4l4.2 4.2l4.2 -4.2" fill="none" stroke="#e0e0e0" stroke-width="1.8" stroke-linecap="round" stroke-linejoin="round"/>
<path d="M1398.700 436.500h10.200l-5.100 9.600z" fill="#b0b0b0"/>
<g fill="none" stroke="#dcdcdc" stroke-width="1.800" stroke-linecap="round"><path d="M1422 452.500a21 21 0 0 1 20.500-20.500"/><path d="M1428.500 452.800a15 15 0 0 1 14.500-14.500"/><path d="M1435 453a8.500 8.500 0 0 1 8.300-8.300"/><circle cx="1442.800" cy="452.300" r="1.300" fill="#dcdcdc"/></g>
<rect x="1463.2" y="428.0" width="213.8" height="29.0" rx="4.5" fill="#1f1f1f" stroke="#363636" stroke-width="1"/>
<rect x="1675" y="428" width="4" height="29" fill="#1f1f1f"/>
<text x="1475.0" y="448.0" fill="#e6e6e6" font-size="17" text-anchor="start" >Wave</text>
<rect x="1677.300" y="428" width="31.400" height="29" fill="#595959"/>
<rect x="1709.700" y="428" width="30.800" height="29" fill="#595959"/>
<rect x="1741.800" y="428" width="30.600" height="29" fill="#5680c2"/>
<rect x="1773.800" y="428" width="30.900" height="29" fill="#5680c2"/>
<path d="M1806.200 428h25.500a4.500 4.500 0 0 1 4.500 4.500v20a4.500 4.500 0 0 1-4.500 4.500h-25.500z" fill="#2b2b2b"/>
<g transform="translate(1681.8,431.8) scale(1.00)" fill="none" stroke="#d0d0d0" stroke-width="1.7"><path d="M5 3.500h12.500M4.500 6l5.500 11M18 6l-5.500 11"/><rect x="1" y="1" width="4.500" height="4.500"/><rect x="17" y="1" width="4.500" height="4.500"/><rect x="9" y="16.500" width="4.500" height="4.500"/></g>
<g fill="none" stroke="#d0d0d0" stroke-width="1.600"><path d="M1718 437v12M1720 451h12M1720 435h8"/><rect x="1715.500" y="432.500" width="4.500" height="4.500"/><rect x="1715.500" y="448.500" width="4.500" height="4.500"/><rect x="1731.500" y="448.500" width="4.500" height="4.500"/><rect x="1729" y="431" width="7" height="7" fill="#d0d0d0"/></g>
<g fill="none" stroke="#f4f4f4" stroke-width="1.700"><rect x="1746.600" y="433.200" width="21" height="14" rx="1.500"/><rect x="1749.300" y="435.900" width="15.600" height="8.600" fill="#f4f4f4" stroke="none"/><path d="M1757.100 447.500v3.600M1751.500 451.800h11.200"/></g>
<g><path d="M1779 436.500h4.500l2-3h7.500l2 3h4.500v15.500h-20.500z" fill="#f4f4f4"/><circle cx="1789.300" cy="443.800" r="5.300" fill="#5680c2"/><circle cx="1789.300" cy="443.800" r="3.300" fill="none" stroke="#cfdcf2" stroke-width="1.300"/></g>
<path d="M1814.2 438.2l6.3 6.3l6.3 -6.3" fill="none" stroke="#e0e0e0" stroke-width="1.8" stroke-linecap="round" stroke-linejoin="round"/>
<path d="M1848 436.500l12.500 12.500M1860.500 436.500l-12.500 12.500" stroke="#e0e0e0" stroke-width="1.700" stroke-linecap="round"/>
<rect x="1888.5" y="438.5" width="1.800" height="1.800" fill="#8a8a8a"/>
<rect x="1888.5" y="443.3" width="1.800" height="1.800" fill="#8a8a8a"/>
<rect x="1892.8" y="438.5" width="1.800" height="1.800" fill="#8a8a8a"/>
<rect x="1892.8" y="443.3" width="1.800" height="1.800" fill="#8a8a8a"/>
<rect x="1897.1" y="438.5" width="1.800" height="1.800" fill="#8a8a8a"/>
<rect x="1897.1" y="443.3" width="1.800" height="1.800" fill="#8a8a8a"/>
<rect x="1901.4" y="438.5" width="1.800" height="1.800" fill="#8a8a8a"/>
<rect x="1901.4" y="443.3" width="1.800" height="1.800" fill="#8a8a8a"/>
<text x="1573.5" y="495.8" fill="#e6e6e6" font-size="17" text-anchor="end" >Motion</text>
<path d="M1593 476.200h135.600v28.400h-135.600a4.500 4.500 0 0 1-4.500-4.500v-19.400a4.500 4.500 0 0 1 4.500-4.500z" fill="#5680c2"/>
<path d="M1729.800 476.200h137.200a4.500 4.500 0 0 1 4.500 4.500v19.400a4.500 4.500 0 0 1-4.500 4.500h-137.200z" fill="#5680c2"/>
<text x="1658.5" y="495.8" fill="#ffffff" font-size="17" text-anchor="middle" >X</text>
<text x="1800.6" y="495.8" fill="#ffffff" font-size="17" text-anchor="middle" >Y</text>
<rect x="1588.500" y="521.500" width="19" height="19" rx="3.500" fill="#5680c2"/>
<path d="M1592.500 531l4.300 4.500l7.300-9.500" fill="none" stroke="#ffffff" stroke-width="2.400" stroke-linecap="round" stroke-linejoin="round"/>
<text x="1614.3" y="536.7" fill="#e6e6e6" font-size="17" text-anchor="start" >Cyclic</text>
<text x="1573.5" y="577.0" fill="#e6e6e6" font-size="17" text-anchor="end" >Along Normals</text>
<rect x="1588.500" y="561.300" width="19" height="19.500" rx="3.500" fill="#676767"/>
<path d="M1625.700 557h76.100v28.400h-76.100a4.500 4.500 0 0 1-4.500-4.500v-19.400a4.500 4.500 0 0 1 4.500-4.500z" fill="#435d8d"/>
<rect x="1703.300" y="557" width="83.200" height="28.400" fill="#435d8d"/>
<path d="M1788 557h79a4.500 4.500 0 0 1 4.500 4.500v19.400a4.500 4.500 0 0 1-4.500 4.500h-79z" fill="#435d8d"/>
<text x="1661.5" y="577.0" fill="#9aa6bd" font-size="17" text-anchor="middle" >X</text>
<text x="1745.0" y="577.0" fill="#9aa6bd" font-size="17" text-anchor="middle" >Y</text>
<text x="1829.7" y="577.0" fill="#9aa6bd" font-size="17" text-anchor="middle" >Z</text>
<text x="1573.5" y="617.3" fill="#e6e6e6" font-size="17" text-anchor="end" >Falloff</text>
<rect x="1587.5" y="596.5" width="284.9" height="29.1" rx="4.5" fill="#595959" stroke="#363636" stroke-width="1"/>
<text x="1730.0" y="617.3" fill="#e8e8e8" font-size="17" text-anchor="middle" >0 m</text>
<text x="1573.5" y="652.3" fill="#e6e6e6" font-size="17" text-anchor="end" >Height</text>
<clipPath id="cl631"><rect x="1588.5" y="631.8" width="283.5" height="28.6" rx="4.500"/></clipPath><g clip-path="url(#cl631)"><rect x="1588.5" y="631.8" width="283.5" height="28.6" fill="#595959"/><rect x="1588.5" y="631.8" width="211.3" height="28.6" fill="#5680c2"/></g><text x="1730.2" y="652.3" fill="#e8e8e8" font-size="17" text-anchor="middle" >1 m</text>
<text x="1573.5" y="688.1" fill="#e6e6e6" font-size="17" text-anchor="end" >Width</text>
<clipPath id="cl667"><rect x="1588.5" y="667.6" width="283.5" height="28.6" rx="4.500"/></clipPath><g clip-path="url(#cl667)"><rect x="1588.5" y="667.6" width="283.5" height="28.6" fill="#595959"/><rect x="1588.5" y="667.6" width="24.8" height="28.6" fill="#5680c2"/></g><text x="1730.2" y="688.1" fill="#e8e8e8" font-size="17" text-anchor="middle" >0.5 m</text>
<text x="1573.5" y="723.5" fill="#e6e6e6" font-size="17" text-anchor="end" >Narrowness</text>
<clipPath id="cl703"><rect x="1588.5" y="703.0" width="283.5" height="28.6" rx="4.500"/></clipPath><g clip-path="url(#cl703)"><rect x="1588.5" y="703.0" width="283.5" height="28.6" fill="#595959"/><rect x="1588.5" y="703.0" width="54.1" height="28.6" fill="#5680c2"/></g><text x="1730.2" y="723.5" fill="#e8e8e8" font-size="17" text-anchor="middle" >2 m</text>
<text x="1573.5" y="763.8" fill="#e6e6e6" font-size="17" text-anchor="end" >Vertex Group</text>
<path d="M1593 743h247.600v29.400h-247.600a4.500 4.500 0 0 1-4.500-4.500v-20.400a4.500 4.500 0 0 1 4.500-4.500z" fill="#1f1f1f"/>
<path d="M1841.600 743h25.900a4.500 4.500 0 0 1 4.500 4.500v20.400a4.500 4.500 0 0 1-4.500 4.500h-25.900z" fill="#4d4d4d"/>
<path d="M1848 757.700h17.500M1851.800 753.500l-4.200 4.200l4.200 4.200M1861.700 753.500l4.200 4.200l-4.200 4.200" fill="none" stroke="#9a9a9a" stroke-width="1.400" stroke-linecap="round" stroke-linejoin="round"/>
<g fill="#e6e6e6"><rect x="1595.5" y="752.5" width="6.2" height="6.2"/><rect x="1595.5" y="760.3" width="6.2" height="6.2"/><rect x="1603.3" y="756.2" width="6.2" height="6.2"/><rect x="1603.3" y="764.0" width="6.2" height="6.2"/></g><g fill="none" stroke="#e6e6e6" stroke-width="1.300"><rect x="1604.0" y="748.7" width="4.800" height="4.800"/><rect x="1611.7" y="752.8" width="4.800" height="4.800"/><rect x="1611.7" y="760.6" width="4.800" height="4.800"/></g>
<circle cx="1889.700" cy="531.0" r="3" fill="#d8d8d8"/>
<circle cx="1889.700" cy="571.2" r="3" fill="#d8d8d8"/>
<circle cx="1889.700" cy="611.0" r="3" fill="#d8d8d8"/>
<circle cx="1889.700" cy="645.8" r="3" fill="#d8d8d8"/>
<circle cx="1889.700" cy="681.8" r="3" fill="#d8d8d8"/>
<circle cx="1889.700" cy="717.3" r="3" fill="#d8d8d8"/>
<circle cx="1889.700" cy="894.5" r="3" fill="#d8d8d8"/>
<circle cx="1889.700" cy="925.8" r="3" fill="#d8d8d8"/>
<path d="M1421.500 801.300h10l-5 9.300z" fill="#b0b0b0"/>
<text x="1442.5" y="812.0" fill="#e0e0e0" font-size="17" text-anchor="start" >Start Position</text>
<text x="1573.5" y="860.0" fill="#e6e6e6" font-size="17" text-anchor="end" >Object</text>
<rect x="1588.5" y="839.5" width="283.5" height="29.5" rx="4.5" fill="#1f1f1f" stroke="#363636" stroke-width="1"/>
<g><rect x="1599.800" y="847.500" width="12" height="12" fill="#f0f0f0"/><path d="M1595.800 848.500v-5h5M1611.500 843.500h5v5M1616.500 858.500v5h-5M1600.800 863.500h-5v-5" fill="none" stroke="#e0e0e0" stroke-width="1.400"/></g>
<g transform="translate(1857.500,854.500) rotate(45)"><rect x="-3.700" y="-12.500" width="7.400" height="9" rx="3.500" fill="#e6e6e6"/><rect x="-5.500" y="-4.500" width="11" height="2.300" fill="#e6e6e6"/><path d="M-2.500 -2.500v11l2.500 4l2.500-4v-11z" fill="none" stroke="#e6e6e6" stroke-width="1.300"/></g>
<text x="1573.5" y="899.8" fill="#e6e6e6" font-size="17" text-anchor="end" >Start Position X</text>
<path d="M1593 880.300h274.500a4.500 4.500 0 0 1 4.500 4.500v24.200h-283.500v-24.200a4.500 4.500 0 0 1 4.500-4.500z" fill="#595959"/>
<text x="1730.0" y="899.6" fill="#e8e8e8" font-size="17" text-anchor="middle" >2 m</text>
<text x="1573.5" y="931.2" fill="#e6e6e6" font-size="17" text-anchor="end" >Y</text>
<path d="M1588.500 910.900h283.500v25.200a4.500 4.500 0 0 1-4.500 4.500h-274.500a4.500 4.500 0 0 1-4.500-4.500z" fill="#595959"/>
<text x="1730.0" y="931.2" fill="#e8e8e8" font-size="17" text-anchor="middle" >-2 m</text>
<path d="M1422 969.300l9.300 5l-9.300 5z" fill="#b0b0b0"/>
<text x="1442.5" y="981.3" fill="#e0e0e0" font-size="17" text-anchor="start" >Time</text>
<path d="M1422 1007.700l9.300 5l-9.300 5z" fill="#b0b0b0"/>
<text x="1442.5" y="1019.7" fill="#e0e0e0" font-size="17" text-anchor="start" >Texture</text>
<circle cx="1724.500" cy="919" r="128.200" fill="none" stroke="#f9abde" stroke-width="7.600"/>
</svg>
</body></html>
